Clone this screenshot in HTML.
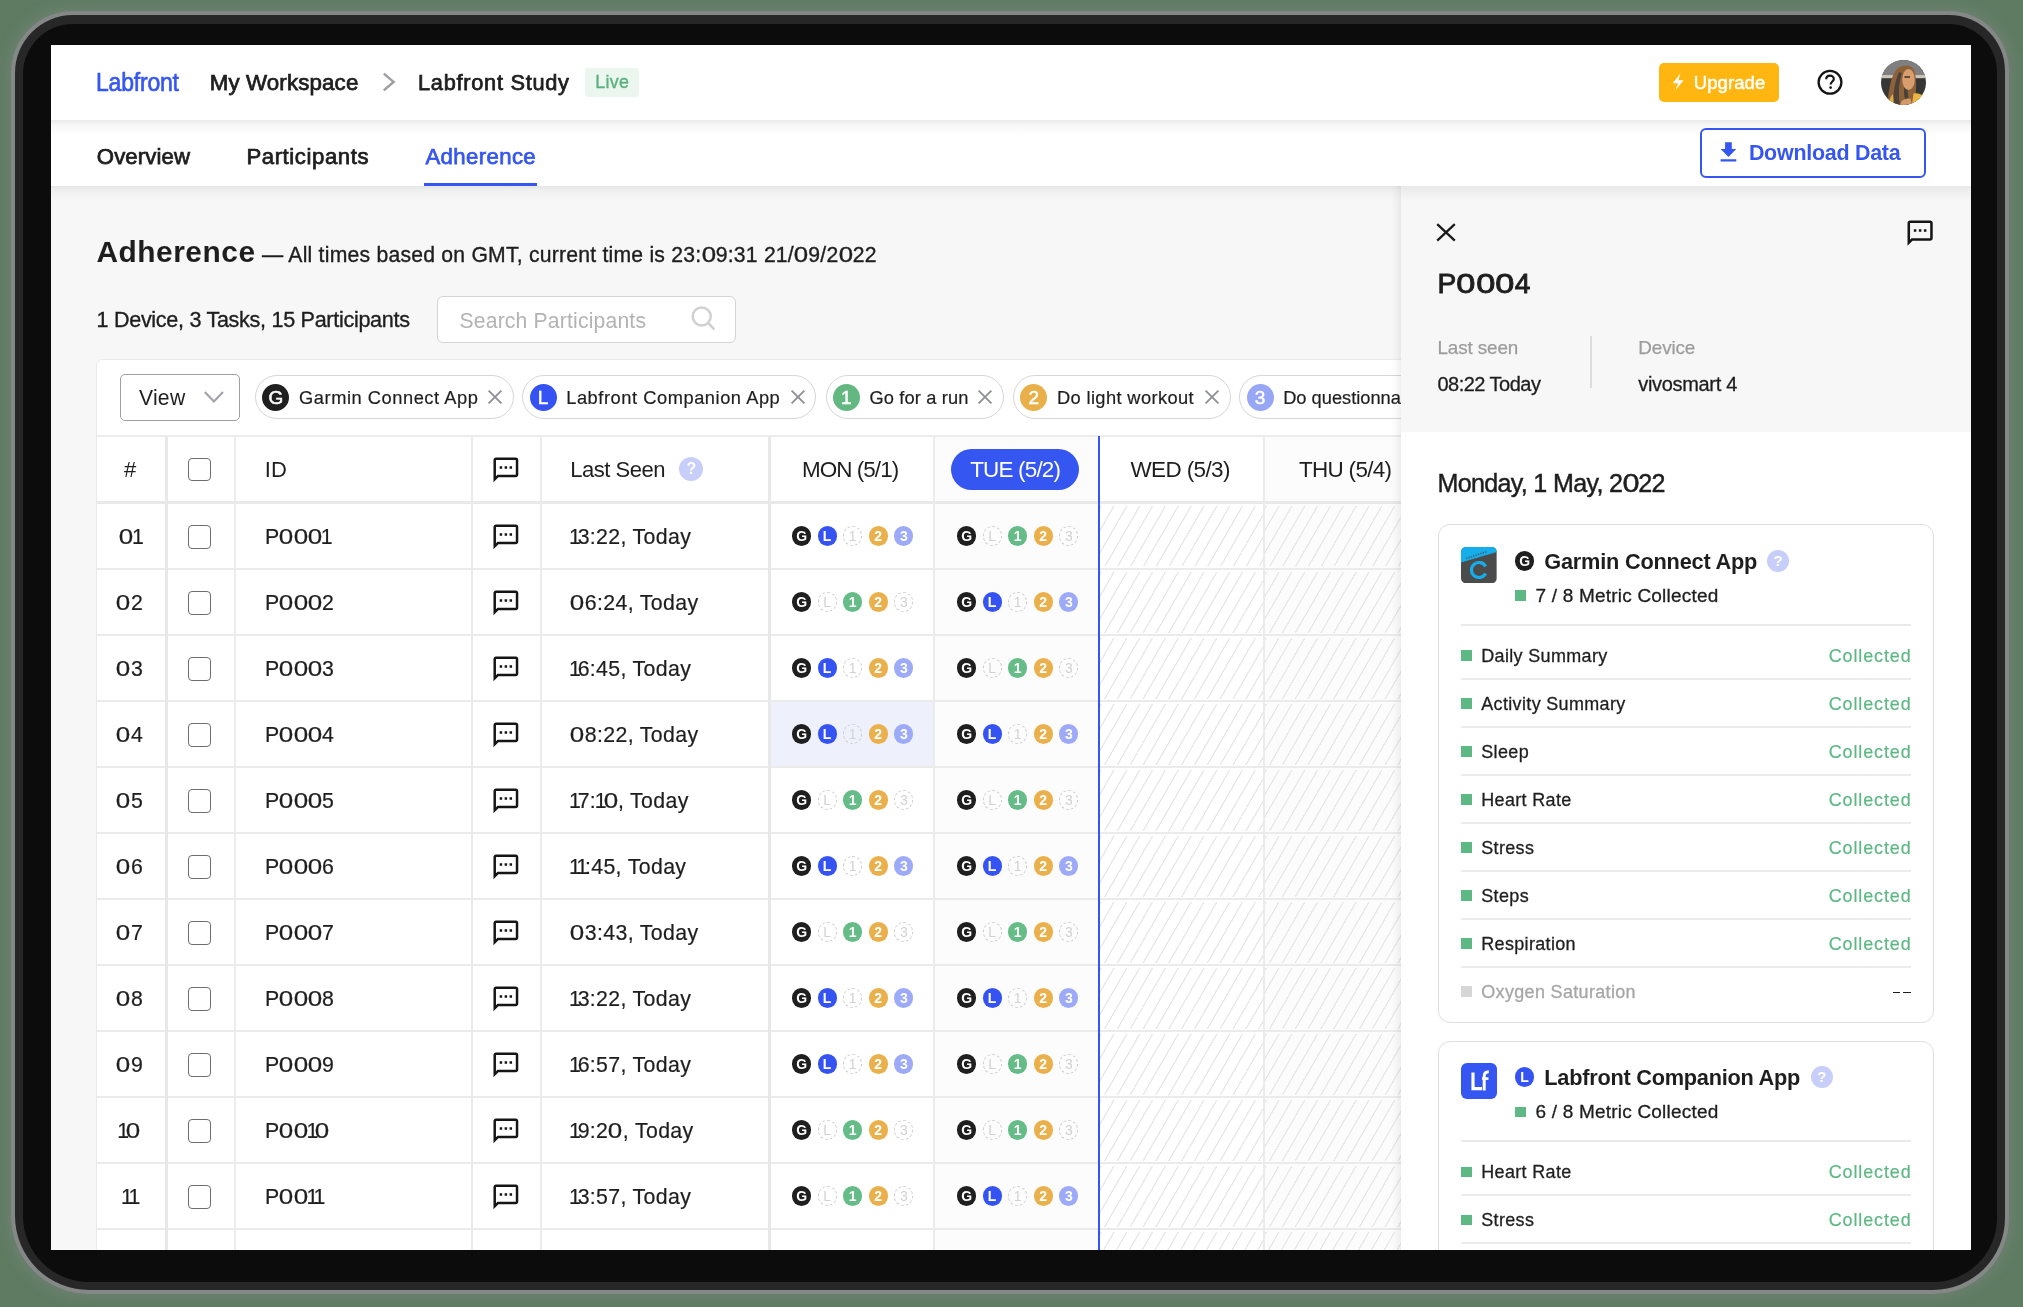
<!DOCTYPE html>
<html><head><meta charset="utf-8"><style>
html,body{margin:0;padding:0;width:2023px;height:1307px;overflow:hidden;background:#5f7c63;}
.t{position:absolute;white-space:pre;line-height:1;font-family:"Liberation Sans",sans-serif;}
.n1{margin:0 -0.17em 0 -0.06em}
.z0{display:inline-block;transform:scaleX(1.22);margin:0 0.055em}
#halo{display:none}
#ring{position:absolute;left:15px;top:15px;width:1990px;height:1275px;border-radius:58px 56px 72px 74px;background:#272727;box-shadow:0 0 0 4px rgba(139,138,140,0.8),0 0 14px 6px rgba(139,138,140,0.42);}
#bezel{position:absolute;left:23px;top:24px;width:1974px;height:1258px;border-radius:50px 48px 64px 66px;background:#0c0c0c;}
#screen{position:absolute;left:51px;top:45px;width:1920px;height:1205px;overflow:hidden;background:#fff;}
#inner{position:absolute;left:-51px;top:-45px;width:2023px;height:1307px;will-change:transform;}
</style></head><body>
<div id="halo"></div><div id="ring"></div><div id="bezel"></div>
<div id="screen"><div id="inner">
<div style="position:absolute;left:51.00px;top:45.00px;width:1920.00px;height:75.00px;background:#fff"></div>
<div style="position:absolute;left:51.00px;top:120.00px;width:1920.00px;height:66.00px;background:linear-gradient(#e9e9e9 0px,#f7f7f7 5px,#fff 15px)"></div>
<div style="position:absolute;left:51.00px;top:186.00px;width:1920.00px;height:1064.00px;background:linear-gradient(#e6e6e6 0px,#f0f0f0 5px,#f7f7f7 15px)"></div>
<div class="t" id="t0" style="left:96.00px;top:72.08px;font-size:23px;font-weight:400;color:#3556f0;letter-spacing:-0.201px;-webkit-text-stroke:0.6px #3556f0;transform:scaleY(1.16);transform-origin:0 19.5px;">Labfront</div>
<div class="t" id="t1" style="left:209.70px;top:72.01px;font-size:22.32px;font-weight:400;color:#1e1e1e;letter-spacing:0.133px;-webkit-text-stroke:0.75px #1e1e1e;">My Workspace</div>
<svg style="position:absolute;left:378.00px;top:68.00px;" width="22.00" height="28.00" viewBox="0 0 22 28"><polyline points="5.8,5.6 15.6,13.9 5.8,22.3" fill="none" stroke="#9c9ca2" stroke-width="2.4"/></svg>
<div class="t" id="t2" style="left:418.00px;top:72.00px;font-size:21.74px;font-weight:400;color:#1e1e1e;letter-spacing:0.740px;-webkit-text-stroke:0.75px #1e1e1e;">Labfront Study</div>
<div style="position:absolute;left:585.00px;top:68.00px;width:54.00px;height:29.00px;background:#eaf6ee;border-radius:4px"></div>
<div class="t" id="t3" style="left:595.30px;top:74.00px;font-size:17.83px;font-weight:400;color:#5bb07f;letter-spacing:0.327px;-webkit-text-stroke:0.35px #5bb07f;">Live</div>
<div style="position:absolute;left:1659.00px;top:63.00px;width:120.00px;height:39.00px;background:#ffb610;border-radius:5px"></div>
<svg style="position:absolute;left:1671.00px;top:72.00px;" width="15.00" height="20.00" viewBox="0 0 15 20"><path d="M9.5 1.3 L1.8 11.2 H7 L4.6 18 L12.6 8.3 H7.4 Z" fill="#fff"/></svg>
<div class="t" id="t4" style="left:1693.80px;top:74.01px;font-size:18.55px;font-weight:400;color:#fff;letter-spacing:0.068px;-webkit-text-stroke:0.45px #fff;">Upgrade</div>
<svg style="position:absolute;left:1815.00px;top:67.00px;" width="30.00" height="30.00" viewBox="0 0 30 30"><circle cx="15" cy="15.3" r="11.4" fill="none" stroke="#151515" stroke-width="2.3"/><path d="M11.2 12.3 C11.2 9.9 13 8.6 15 8.6 C17.1 8.6 18.8 10 18.8 12 C18.8 14.4 15.6 14.6 15.6 17.6" fill="none" stroke="#151515" stroke-width="2.2"/><circle cx="15.6" cy="20.6" r="1.35" fill="#151515"/></svg>
<svg style="position:absolute;left:1881.00px;top:60.00px;" width="45.00" height="45.00" viewBox="0 0 45 45"><defs><clipPath id="av"><circle cx="22.5" cy="22.5" r="22.5"/></clipPath></defs>
<g clip-path="url(#av)">
<rect width="45" height="45" fill="#363636"/>
<rect width="45" height="15.5" fill="#7f7f81"/>
<rect y="15" width="45" height="3.2" fill="#cbc5b6"/>
<path d="M7 45 C7 32 10 14 17 8 C23 4 30 5 32.5 9 C35.5 14 35.5 26 34.5 36 L35 45 Z" fill="#8e6239"/>
<path d="M12 45 C12 34 14 20 18 12 L21 13 C18 22 17 34 19 45 Z" fill="#4d4239"/>
<path d="M24 24 C22 30 23 38 26 45 L29 45 C27 38 26 30 27 24 Z" fill="#4a4038"/>
<ellipse cx="27.5" cy="19.5" rx="6.2" ry="10.5" fill="#d89e6e"/>
<path d="M23.5 17 H29" stroke="#3a302a" stroke-width="1.6"/>
<path d="M31 45 L32.5 33.5 C36.5 32.5 41 34.5 45 38 L45 45 Z" fill="#eeb443"/>
<path d="M19 45 C20 40 24 38 29.5 38.5 L31 45 Z" fill="#d49a6a"/>
<path d="M7 45 C8 40 10 36 12 34 L13 45 Z" fill="#e3ad45"/>
</g></svg>
<div class="t" id="t5" style="left:96.80px;top:146.01px;font-size:22.17px;font-weight:400;color:#1e1e1e;letter-spacing:0.122px;-webkit-text-stroke:0.75px #1e1e1e;">Overview</div>
<div class="t" id="t6" style="left:246.40px;top:146.01px;font-size:22.17px;font-weight:400;color:#1e1e1e;letter-spacing:0.576px;-webkit-text-stroke:0.75px #1e1e1e;">Participants</div>
<div class="t" id="t7" style="left:425.40px;top:146.01px;font-size:22.17px;font-weight:400;color:#3556f0;letter-spacing:0.391px;-webkit-text-stroke:0.75px #3556f0;">Adherence</div>
<div style="position:absolute;left:424.20px;top:182.70px;width:112.60px;height:3.10px;background:#3556f0"></div>
<div style="position:absolute;left:1700.00px;top:128.00px;width:226.00px;height:50.00px;border:2px solid #3556f0;border-radius:6px;background:#fff;box-sizing:border-box"></div>
<svg style="position:absolute;left:1714.60px;top:139.40px;" width="26.90" height="26.90" viewBox="0 0 24 24"><path d="M19 9h-4V3H9v6H5l7 7 7-7zM5 18v2h14v-2H5z" fill="#3556f0"/></svg>
<div class="t" id="t8" style="left:1748.90px;top:143.01px;font-size:21.45px;font-weight:700;color:#3556f0;letter-spacing:-0.254px;">Download Data</div>
<div class="t" id="t9" style="left:96.50px;top:237.00px;font-size:29.86px;font-weight:700;color:#1e1e1e;letter-spacing:0.521px;">Adherence</div>
<div class="t" id="t10" style="left:262.00px;top:244.01px;font-size:21.16px;font-weight:400;color:#1e1e1e;letter-spacing:0.227px;-webkit-text-stroke:0.35px #1e1e1e;">— All times based on GMT, current time is 23:<span class="z0">0</span>9:31 21/<span class="z0">0</span>9/2<span class="z0">0</span>22</div>
<div class="t" id="t11" style="left:96.50px;top:309.00px;font-size:21.59px;font-weight:400;color:#1e1e1e;letter-spacing:-0.301px;-webkit-text-stroke:0.35px #1e1e1e;">1 Device, 3 Tasks, 15 Participants</div>
<div style="position:absolute;left:437.00px;top:296.00px;width:299.00px;height:46.50px;border:1.5px solid #d4d4d4;border-radius:6px;background:#fff;box-sizing:border-box"></div>
<div class="t" id="t12" style="left:459.50px;top:310.01px;font-size:21.16px;font-weight:400;color:#b3b3b3;letter-spacing:0.169px;">Search Participants</div>
<svg style="position:absolute;left:688.00px;top:303.00px;" width="30.00" height="30.00" viewBox="0 0 30 30"><circle cx="13.7" cy="13.4" r="9" fill="none" stroke="#d0d0d0" stroke-width="2.5"/><line x1="20.2" y1="19.9" x2="26.3" y2="26.3" stroke="#d0d0d0" stroke-width="2.6"/></svg>
<div style="position:absolute;left:96.40px;top:358.70px;width:1308.60px;height:901.30px;background:#fff;border-top:1.5px solid #ebebeb;border-left:1.4px solid #ebebeb;border-top-left-radius:6px;box-sizing:border-box"></div>
<div style="position:absolute;left:120.20px;top:373.80px;width:119.40px;height:47.00px;border:1.5px solid #a0a0a0;border-radius:5px;box-sizing:border-box"></div>
<div class="t" id="t13" style="left:138.90px;top:387.00px;font-size:21.16px;font-weight:400;color:#1e1e1e;letter-spacing:0.272px;">View</div>
<svg style="position:absolute;left:200.00px;top:386.00px;" width="28.00" height="22.00" viewBox="0 0 28 22"><polyline points="4.8,6 13.9,15.4 23,6" fill="none" stroke="#a2a2aa" stroke-width="2.2"/></svg>
<div style="position:absolute;left:255.20px;top:375.20px;width:258.50px;height:44.20px;border:1.5px solid #d6d6d6;border-radius:23px;box-sizing:border-box;background:#fff"></div>
<div style="position:absolute;left:262.40px;top:383.80px;width:27.00px;height:27.00px;background:#1f1f1f;border-radius:50%"></div>
<div style="position:absolute;left:262.40px;top:383.80px;width:27px;height:27px;line-height:27px;text-align:center;color:#fff;font-family:'Liberation Sans',sans-serif;font-size:19px;font-weight:400;-webkit-text-stroke:0.5px #fff">G</div>
<div class="t" id="t14" style="left:299.10px;top:389.01px;font-size:18.26px;font-weight:400;color:#1e1e1e;letter-spacing:0.546px;-webkit-text-stroke:0.2px #1e1e1e;">Garmin Connect App</div>
<svg style="position:absolute;left:487.00px;top:389.40px;" width="16.00" height="16.00" viewBox="0 0 16 16"><path d="M1.6 1.6 L14.4 14.4 M14.4 1.6 L1.6 14.4" stroke="#8e9096" stroke-width="1.8"/></svg>
<div style="position:absolute;left:522.30px;top:375.20px;width:294.20px;height:44.20px;border:1.5px solid #d6d6d6;border-radius:23px;box-sizing:border-box;background:#fff"></div>
<div style="position:absolute;left:529.50px;top:383.80px;width:27.00px;height:27.00px;background:#3553f2;border-radius:50%"></div>
<div style="position:absolute;left:529.50px;top:383.80px;width:27px;height:27px;line-height:27px;text-align:center;color:#fff;font-family:'Liberation Sans',sans-serif;font-size:19px;font-weight:400;-webkit-text-stroke:0.5px #fff">L</div>
<div class="t" id="t15" style="left:566.20px;top:389.01px;font-size:18.26px;font-weight:400;color:#1e1e1e;letter-spacing:0.556px;-webkit-text-stroke:0.2px #1e1e1e;">Labfront Companion App</div>
<svg style="position:absolute;left:789.80px;top:389.40px;" width="16.00" height="16.00" viewBox="0 0 16 16"><path d="M1.6 1.6 L14.4 14.4 M14.4 1.6 L1.6 14.4" stroke="#8e9096" stroke-width="1.8"/></svg>
<div style="position:absolute;left:825.50px;top:375.20px;width:178.30px;height:44.20px;border:1.5px solid #d6d6d6;border-radius:23px;box-sizing:border-box;background:#fff"></div>
<div style="position:absolute;left:832.70px;top:383.80px;width:27.00px;height:27.00px;background:#63b882;border-radius:50%"></div>
<div style="position:absolute;left:832.70px;top:383.80px;width:27px;height:27px;line-height:27px;text-align:center;color:#fff;font-family:'Liberation Sans',sans-serif;font-size:19px;font-weight:400;-webkit-text-stroke:0.5px #fff">1</div>
<div class="t" id="t16" style="left:869.40px;top:389.01px;font-size:18.26px;font-weight:400;color:#1e1e1e;letter-spacing:0.146px;-webkit-text-stroke:0.2px #1e1e1e;">Go for a run</div>
<svg style="position:absolute;left:977.10px;top:389.40px;" width="16.00" height="16.00" viewBox="0 0 16 16"><path d="M1.6 1.6 L14.4 14.4 M14.4 1.6 L1.6 14.4" stroke="#8e9096" stroke-width="1.8"/></svg>
<div style="position:absolute;left:1013.00px;top:375.20px;width:217.60px;height:44.20px;border:1.5px solid #d6d6d6;border-radius:23px;box-sizing:border-box;background:#fff"></div>
<div style="position:absolute;left:1020.20px;top:383.80px;width:27.00px;height:27.00px;background:#e9b04a;border-radius:50%"></div>
<div style="position:absolute;left:1020.20px;top:383.80px;width:27px;height:27px;line-height:27px;text-align:center;color:#fff;font-family:'Liberation Sans',sans-serif;font-size:19px;font-weight:400;-webkit-text-stroke:0.5px #fff">2</div>
<div class="t" id="t17" style="left:1056.90px;top:389.01px;font-size:18.26px;font-weight:400;color:#1e1e1e;letter-spacing:0.389px;-webkit-text-stroke:0.2px #1e1e1e;">Do light workout</div>
<svg style="position:absolute;left:1203.90px;top:389.40px;" width="16.00" height="16.00" viewBox="0 0 16 16"><path d="M1.6 1.6 L14.4 14.4 M14.4 1.6 L1.6 14.4" stroke="#8e9096" stroke-width="1.8"/></svg>
<div style="position:absolute;left:1239.30px;top:375.20px;width:240.70px;height:44.20px;border:1.5px solid #d6d6d6;border-radius:23px;box-sizing:border-box;background:#fff"></div>
<div style="position:absolute;left:1246.50px;top:383.80px;width:27.00px;height:27.00px;background:#97a6f5;border-radius:50%"></div>
<div style="position:absolute;left:1246.50px;top:383.80px;width:27px;height:27px;line-height:27px;text-align:center;color:#fff;font-family:'Liberation Sans',sans-serif;font-size:19px;font-weight:400;-webkit-text-stroke:0.5px #fff">3</div>
<div class="t" id="t18" style="left:1283.20px;top:389.01px;font-size:18.26px;font-weight:400;color:#1e1e1e;-webkit-text-stroke:0.2px #1e1e1e;">Do questionnaire</div>
<div style="position:absolute;left:97.00px;top:435.00px;width:1308.00px;height:1.50px;background:#ececec"></div>
<div style="position:absolute;left:934.70px;top:436.50px;width:163.30px;height:813.50px;background:#fcfcfc"></div>
<div style="position:absolute;left:1264.90px;top:436.50px;width:140.10px;height:813.50px;background:#fcfcfc"></div>
<div style="position:absolute;left:771.00px;top:702.00px;width:161.70px;height:65.00px;background:#eef1fc"></div>
<div style="position:absolute;left:1100.00px;top:506.20px;width:163.10px;height:60.30px;background:repeating-linear-gradient(120deg,rgba(0,0,0,0) 0px,rgba(0,0,0,0) 0.2px,#e8e8e8 0.45px,#e8e8e8 1.55px,rgba(0,0,0,0) 1.8px,rgba(0,0,0,0) 11.13px)"></div>
<div style="position:absolute;left:1264.90px;top:506.20px;width:140.10px;height:60.30px;background:repeating-linear-gradient(120deg,rgba(0,0,0,0) 0px,rgba(0,0,0,0) 0.2px,#e8e8e8 0.45px,#e8e8e8 1.55px,rgba(0,0,0,0) 1.8px,rgba(0,0,0,0) 11.13px)"></div>
<div style="position:absolute;left:1100.00px;top:572.00px;width:163.10px;height:60.50px;background:repeating-linear-gradient(120deg,rgba(0,0,0,0) 0px,rgba(0,0,0,0) 0.2px,#e8e8e8 0.45px,#e8e8e8 1.55px,rgba(0,0,0,0) 1.8px,rgba(0,0,0,0) 11.13px)"></div>
<div style="position:absolute;left:1264.90px;top:572.00px;width:140.10px;height:60.50px;background:repeating-linear-gradient(120deg,rgba(0,0,0,0) 0px,rgba(0,0,0,0) 0.2px,#e8e8e8 0.45px,#e8e8e8 1.55px,rgba(0,0,0,0) 1.8px,rgba(0,0,0,0) 11.13px)"></div>
<div style="position:absolute;left:1100.00px;top:638.00px;width:163.10px;height:60.50px;background:repeating-linear-gradient(120deg,rgba(0,0,0,0) 0px,rgba(0,0,0,0) 0.2px,#e8e8e8 0.45px,#e8e8e8 1.55px,rgba(0,0,0,0) 1.8px,rgba(0,0,0,0) 11.13px)"></div>
<div style="position:absolute;left:1264.90px;top:638.00px;width:140.10px;height:60.50px;background:repeating-linear-gradient(120deg,rgba(0,0,0,0) 0px,rgba(0,0,0,0) 0.2px,#e8e8e8 0.45px,#e8e8e8 1.55px,rgba(0,0,0,0) 1.8px,rgba(0,0,0,0) 11.13px)"></div>
<div style="position:absolute;left:1100.00px;top:704.00px;width:163.10px;height:60.50px;background:repeating-linear-gradient(120deg,rgba(0,0,0,0) 0px,rgba(0,0,0,0) 0.2px,#e8e8e8 0.45px,#e8e8e8 1.55px,rgba(0,0,0,0) 1.8px,rgba(0,0,0,0) 11.13px)"></div>
<div style="position:absolute;left:1264.90px;top:704.00px;width:140.10px;height:60.50px;background:repeating-linear-gradient(120deg,rgba(0,0,0,0) 0px,rgba(0,0,0,0) 0.2px,#e8e8e8 0.45px,#e8e8e8 1.55px,rgba(0,0,0,0) 1.8px,rgba(0,0,0,0) 11.13px)"></div>
<div style="position:absolute;left:1100.00px;top:770.00px;width:163.10px;height:60.50px;background:repeating-linear-gradient(120deg,rgba(0,0,0,0) 0px,rgba(0,0,0,0) 0.2px,#e8e8e8 0.45px,#e8e8e8 1.55px,rgba(0,0,0,0) 1.8px,rgba(0,0,0,0) 11.13px)"></div>
<div style="position:absolute;left:1264.90px;top:770.00px;width:140.10px;height:60.50px;background:repeating-linear-gradient(120deg,rgba(0,0,0,0) 0px,rgba(0,0,0,0) 0.2px,#e8e8e8 0.45px,#e8e8e8 1.55px,rgba(0,0,0,0) 1.8px,rgba(0,0,0,0) 11.13px)"></div>
<div style="position:absolute;left:1100.00px;top:836.00px;width:163.10px;height:60.50px;background:repeating-linear-gradient(120deg,rgba(0,0,0,0) 0px,rgba(0,0,0,0) 0.2px,#e8e8e8 0.45px,#e8e8e8 1.55px,rgba(0,0,0,0) 1.8px,rgba(0,0,0,0) 11.13px)"></div>
<div style="position:absolute;left:1264.90px;top:836.00px;width:140.10px;height:60.50px;background:repeating-linear-gradient(120deg,rgba(0,0,0,0) 0px,rgba(0,0,0,0) 0.2px,#e8e8e8 0.45px,#e8e8e8 1.55px,rgba(0,0,0,0) 1.8px,rgba(0,0,0,0) 11.13px)"></div>
<div style="position:absolute;left:1100.00px;top:902.00px;width:163.10px;height:60.50px;background:repeating-linear-gradient(120deg,rgba(0,0,0,0) 0px,rgba(0,0,0,0) 0.2px,#e8e8e8 0.45px,#e8e8e8 1.55px,rgba(0,0,0,0) 1.8px,rgba(0,0,0,0) 11.13px)"></div>
<div style="position:absolute;left:1264.90px;top:902.00px;width:140.10px;height:60.50px;background:repeating-linear-gradient(120deg,rgba(0,0,0,0) 0px,rgba(0,0,0,0) 0.2px,#e8e8e8 0.45px,#e8e8e8 1.55px,rgba(0,0,0,0) 1.8px,rgba(0,0,0,0) 11.13px)"></div>
<div style="position:absolute;left:1100.00px;top:968.00px;width:163.10px;height:60.50px;background:repeating-linear-gradient(120deg,rgba(0,0,0,0) 0px,rgba(0,0,0,0) 0.2px,#e8e8e8 0.45px,#e8e8e8 1.55px,rgba(0,0,0,0) 1.8px,rgba(0,0,0,0) 11.13px)"></div>
<div style="position:absolute;left:1264.90px;top:968.00px;width:140.10px;height:60.50px;background:repeating-linear-gradient(120deg,rgba(0,0,0,0) 0px,rgba(0,0,0,0) 0.2px,#e8e8e8 0.45px,#e8e8e8 1.55px,rgba(0,0,0,0) 1.8px,rgba(0,0,0,0) 11.13px)"></div>
<div style="position:absolute;left:1100.00px;top:1034.00px;width:163.10px;height:60.50px;background:repeating-linear-gradient(120deg,rgba(0,0,0,0) 0px,rgba(0,0,0,0) 0.2px,#e8e8e8 0.45px,#e8e8e8 1.55px,rgba(0,0,0,0) 1.8px,rgba(0,0,0,0) 11.13px)"></div>
<div style="position:absolute;left:1264.90px;top:1034.00px;width:140.10px;height:60.50px;background:repeating-linear-gradient(120deg,rgba(0,0,0,0) 0px,rgba(0,0,0,0) 0.2px,#e8e8e8 0.45px,#e8e8e8 1.55px,rgba(0,0,0,0) 1.8px,rgba(0,0,0,0) 11.13px)"></div>
<div style="position:absolute;left:1100.00px;top:1100.00px;width:163.10px;height:60.50px;background:repeating-linear-gradient(120deg,rgba(0,0,0,0) 0px,rgba(0,0,0,0) 0.2px,#e8e8e8 0.45px,#e8e8e8 1.55px,rgba(0,0,0,0) 1.8px,rgba(0,0,0,0) 11.13px)"></div>
<div style="position:absolute;left:1264.90px;top:1100.00px;width:140.10px;height:60.50px;background:repeating-linear-gradient(120deg,rgba(0,0,0,0) 0px,rgba(0,0,0,0) 0.2px,#e8e8e8 0.45px,#e8e8e8 1.55px,rgba(0,0,0,0) 1.8px,rgba(0,0,0,0) 11.13px)"></div>
<div style="position:absolute;left:1100.00px;top:1166.00px;width:163.10px;height:60.50px;background:repeating-linear-gradient(120deg,rgba(0,0,0,0) 0px,rgba(0,0,0,0) 0.2px,#e8e8e8 0.45px,#e8e8e8 1.55px,rgba(0,0,0,0) 1.8px,rgba(0,0,0,0) 11.13px)"></div>
<div style="position:absolute;left:1264.90px;top:1166.00px;width:140.10px;height:60.50px;background:repeating-linear-gradient(120deg,rgba(0,0,0,0) 0px,rgba(0,0,0,0) 0.2px,#e8e8e8 0.45px,#e8e8e8 1.55px,rgba(0,0,0,0) 1.8px,rgba(0,0,0,0) 11.13px)"></div>
<div style="position:absolute;left:1100.00px;top:1232.00px;width:163.10px;height:20.50px;background:repeating-linear-gradient(120deg,rgba(0,0,0,0) 0px,rgba(0,0,0,0) 0.2px,#e8e8e8 0.45px,#e8e8e8 1.55px,rgba(0,0,0,0) 1.8px,rgba(0,0,0,0) 11.13px)"></div>
<div style="position:absolute;left:1264.90px;top:1232.00px;width:140.10px;height:20.50px;background:repeating-linear-gradient(120deg,rgba(0,0,0,0) 0px,rgba(0,0,0,0) 0.2px,#e8e8e8 0.45px,#e8e8e8 1.55px,rgba(0,0,0,0) 1.8px,rgba(0,0,0,0) 11.13px)"></div>
<div style="position:absolute;left:97.00px;top:501.30px;width:1308.00px;height:2.90px;background:#e9e9e9"></div>
<div style="position:absolute;left:97.00px;top:568.20px;width:1308.00px;height:2.00px;background:#ebebeb"></div>
<div style="position:absolute;left:97.00px;top:634.20px;width:1308.00px;height:2.00px;background:#ebebeb"></div>
<div style="position:absolute;left:97.00px;top:700.20px;width:1308.00px;height:2.00px;background:#ebebeb"></div>
<div style="position:absolute;left:97.00px;top:766.20px;width:1308.00px;height:2.00px;background:#ebebeb"></div>
<div style="position:absolute;left:97.00px;top:832.20px;width:1308.00px;height:2.00px;background:#ebebeb"></div>
<div style="position:absolute;left:97.00px;top:898.20px;width:1308.00px;height:2.00px;background:#ebebeb"></div>
<div style="position:absolute;left:97.00px;top:964.20px;width:1308.00px;height:2.00px;background:#ebebeb"></div>
<div style="position:absolute;left:97.00px;top:1030.20px;width:1308.00px;height:2.00px;background:#ebebeb"></div>
<div style="position:absolute;left:97.00px;top:1096.20px;width:1308.00px;height:2.00px;background:#ebebeb"></div>
<div style="position:absolute;left:97.00px;top:1162.20px;width:1308.00px;height:2.00px;background:#ebebeb"></div>
<div style="position:absolute;left:97.00px;top:1228.20px;width:1308.00px;height:2.00px;background:#ebebeb"></div>
<div style="position:absolute;left:165.20px;top:436.50px;width:2.80px;height:813.50px;background:#e8e8e8"></div>
<div style="position:absolute;left:234.00px;top:436.50px;width:2.00px;height:813.50px;background:#ececec"></div>
<div style="position:absolute;left:470.50px;top:436.50px;width:2.00px;height:813.50px;background:#ebebeb"></div>
<div style="position:absolute;left:540.00px;top:436.50px;width:2.00px;height:813.50px;background:#ebebeb"></div>
<div style="position:absolute;left:768.00px;top:436.50px;width:3.00px;height:813.50px;background:#e8e8e8"></div>
<div style="position:absolute;left:932.70px;top:436.50px;width:2.00px;height:813.50px;background:#ebebeb"></div>
<div style="position:absolute;left:1263.10px;top:436.50px;width:1.80px;height:813.50px;background:#ebebeb"></div>
<div style="position:absolute;left:1098.00px;top:436.00px;width:2.00px;height:814.00px;background:#3556f0"></div>
<div class="t" id="t19" style="left:124.00px;top:459.01px;font-size:22.03px;font-weight:400;color:#1e1e1e;">#</div>
<div style="position:absolute;left:187.80px;top:457.60px;width:23.50px;height:23.40px;border:1.8px solid #6e6e6e;border-radius:4px;box-sizing:border-box"></div>
<div class="t" id="t20" style="left:264.80px;top:459.01px;font-size:22.03px;font-weight:400;color:#1e1e1e;">ID</div>
<svg style="position:absolute;left:490.60px;top:454.60px;" width="29.76" height="29.76" viewBox="0 0 24 24"><path d="M20 2H4c-1.1 0-2 .9-2 2v18l4-4h14c1.1 0 2-.9 2-2V4c0-1.1-.9-2-2-2zm0 14H5.17L4 17.17V4h16v12zM7 9h2v2H7zm4 0h2v2h-2zm4 0h2v2h-2z" fill="#151515"/></svg>
<div class="t" id="t21" style="left:570.30px;top:459.01px;font-size:22.03px;font-weight:400;color:#1e1e1e;letter-spacing:-0.482px;">Last Seen</div>
<div style="position:absolute;left:679.40px;top:457.00px;width:24.00px;height:24.00px;background:#c6cef9;border-radius:50%"></div>
<div style="position:absolute;left:679.4px;top:457px;width:24px;height:24px;line-height:24px;text-align:center;color:#fff;font-family:'Liberation Sans',sans-serif;font-size:16px;font-weight:700">?</div>
<div class="t" id="t22" style="left:801.90px;top:459.01px;font-size:22.46px;font-weight:400;color:#1e1e1e;letter-spacing:-0.937px;">MON (5/1)</div>
<div style="position:absolute;left:950.80px;top:448.70px;width:128.70px;height:41.70px;background:#3556f0;border-radius:21px"></div>
<div class="t" id="t23" style="left:970.20px;top:459.01px;font-size:22.46px;font-weight:400;color:#fff;letter-spacing:-0.814px;">TUE (5/2)</div>
<div class="t" id="t24" style="left:1130.50px;top:459.01px;font-size:22.46px;font-weight:400;color:#1e1e1e;letter-spacing:-0.600px;">WED (5/3)</div>
<div class="t" id="t25" style="left:1299.00px;top:459.01px;font-size:22.46px;font-weight:400;color:#1e1e1e;letter-spacing:-0.695px;">THU (5/4)</div>
<div class="t" id="t26" style="left:118.62px;top:527.01px;font-size:21.3px;font-weight:400;color:#1e1e1e;letter-spacing:0.600px;-webkit-text-stroke:0.2px #1e1e1e;"><span class="z0">0</span><span class="n1">1</span></div>
<div style="position:absolute;left:187.80px;top:525.30px;width:23.50px;height:23.40px;border:1.8px solid #6e6e6e;border-radius:4px;box-sizing:border-box"></div>
<div class="t" id="t27" style="left:264.90px;top:527.01px;font-size:21.3px;font-weight:400;color:#1e1e1e;letter-spacing:0.100px;-webkit-text-stroke:0.2px #1e1e1e;">P<span class="z0">0</span><span class="z0">0</span><span class="z0">0</span><span class="n1">1</span></div>
<svg style="position:absolute;left:490.60px;top:521.60px;" width="29.76" height="29.76" viewBox="0 0 24 24"><path d="M20 2H4c-1.1 0-2 .9-2 2v18l4-4h14c1.1 0 2-.9 2-2V4c0-1.1-.9-2-2-2zm0 14H5.17L4 17.17V4h16v12zM7 9h2v2H7zm4 0h2v2h-2zm4 0h2v2h-2z" fill="#151515"/></svg>
<div class="t" id="t28" style="left:570.30px;top:527.01px;font-size:21.3px;font-weight:400;color:#1e1e1e;letter-spacing:0.350px;-webkit-text-stroke:0.2px #1e1e1e;"><span class="n1">1</span>3:22, Today</div>
<div style="position:absolute;left:791.95px;top:526.45px;width:19.30px;height:19.30px;background:#1f1f1f;border-radius:50%"></div>
<div style="position:absolute;left:791.60px;top:526.10px;width:20px;height:20px;line-height:20px;text-align:center;color:#fff;font-family:'Liberation Sans',sans-serif;font-size:14px;font-weight:700">G</div>
<div style="position:absolute;left:817.50px;top:526.45px;width:19.30px;height:19.30px;background:#3553f2;border-radius:50%"></div>
<div style="position:absolute;left:817.15px;top:526.10px;width:20px;height:20px;line-height:20px;text-align:center;color:#fff;font-family:'Liberation Sans',sans-serif;font-size:14px;font-weight:700">L</div>
<div style="position:absolute;left:843.05px;top:526.45px;width:19.30px;height:19.30px;border:1.5px dashed #cbcbcb;border-radius:50%;box-sizing:border-box"></div>
<div style="position:absolute;left:842.70px;top:526.10px;width:20px;height:20px;line-height:20px;text-align:center;color:#d2d2d2;font-family:'Liberation Sans',sans-serif;font-size:14px">1</div>
<div style="position:absolute;left:868.60px;top:526.45px;width:19.30px;height:19.30px;background:#eab04c;border-radius:50%"></div>
<div style="position:absolute;left:868.25px;top:526.10px;width:20px;height:20px;line-height:20px;text-align:center;color:#fff;font-family:'Liberation Sans',sans-serif;font-size:14px;font-weight:700">2</div>
<div style="position:absolute;left:894.15px;top:526.45px;width:19.30px;height:19.30px;background:#9caaf8;border-radius:50%"></div>
<div style="position:absolute;left:893.80px;top:526.10px;width:20px;height:20px;line-height:20px;text-align:center;color:#fff;font-family:'Liberation Sans',sans-serif;font-size:14px;font-weight:700">3</div>
<div style="position:absolute;left:956.95px;top:526.45px;width:19.30px;height:19.30px;background:#1f1f1f;border-radius:50%"></div>
<div style="position:absolute;left:956.60px;top:526.10px;width:20px;height:20px;line-height:20px;text-align:center;color:#fff;font-family:'Liberation Sans',sans-serif;font-size:14px;font-weight:700">G</div>
<div style="position:absolute;left:982.50px;top:526.45px;width:19.30px;height:19.30px;border:1.5px dashed #cbcbcb;border-radius:50%;box-sizing:border-box"></div>
<div style="position:absolute;left:982.15px;top:526.10px;width:20px;height:20px;line-height:20px;text-align:center;color:#d2d2d2;font-family:'Liberation Sans',sans-serif;font-size:14px">L</div>
<div style="position:absolute;left:1008.05px;top:526.45px;width:19.30px;height:19.30px;background:#65bc87;border-radius:50%"></div>
<div style="position:absolute;left:1007.70px;top:526.10px;width:20px;height:20px;line-height:20px;text-align:center;color:#fff;font-family:'Liberation Sans',sans-serif;font-size:14px;font-weight:700">1</div>
<div style="position:absolute;left:1033.60px;top:526.45px;width:19.30px;height:19.30px;background:#eab04c;border-radius:50%"></div>
<div style="position:absolute;left:1033.25px;top:526.10px;width:20px;height:20px;line-height:20px;text-align:center;color:#fff;font-family:'Liberation Sans',sans-serif;font-size:14px;font-weight:700">2</div>
<div style="position:absolute;left:1059.15px;top:526.45px;width:19.30px;height:19.30px;border:1.5px dashed #cbcbcb;border-radius:50%;box-sizing:border-box"></div>
<div style="position:absolute;left:1058.80px;top:526.10px;width:20px;height:20px;line-height:20px;text-align:center;color:#d2d2d2;font-family:'Liberation Sans',sans-serif;font-size:14px">3</div>
<div class="t" id="t29" style="left:116.18px;top:593.01px;font-size:21.3px;font-weight:400;color:#1e1e1e;letter-spacing:0.600px;-webkit-text-stroke:0.2px #1e1e1e;"><span class="z0">0</span>2</div>
<div style="position:absolute;left:187.80px;top:591.30px;width:23.50px;height:23.40px;border:1.8px solid #6e6e6e;border-radius:4px;box-sizing:border-box"></div>
<div class="t" id="t30" style="left:264.90px;top:593.01px;font-size:21.3px;font-weight:400;color:#1e1e1e;letter-spacing:0.100px;-webkit-text-stroke:0.2px #1e1e1e;">P<span class="z0">0</span><span class="z0">0</span><span class="z0">0</span>2</div>
<svg style="position:absolute;left:490.60px;top:587.60px;" width="29.76" height="29.76" viewBox="0 0 24 24"><path d="M20 2H4c-1.1 0-2 .9-2 2v18l4-4h14c1.1 0 2-.9 2-2V4c0-1.1-.9-2-2-2zm0 14H5.17L4 17.17V4h16v12zM7 9h2v2H7zm4 0h2v2h-2zm4 0h2v2h-2z" fill="#151515"/></svg>
<div class="t" id="t31" style="left:570.30px;top:593.01px;font-size:21.3px;font-weight:400;color:#1e1e1e;letter-spacing:0.350px;-webkit-text-stroke:0.2px #1e1e1e;"><span class="z0">0</span>6:24, Today</div>
<div style="position:absolute;left:791.95px;top:592.45px;width:19.30px;height:19.30px;background:#1f1f1f;border-radius:50%"></div>
<div style="position:absolute;left:791.60px;top:592.10px;width:20px;height:20px;line-height:20px;text-align:center;color:#fff;font-family:'Liberation Sans',sans-serif;font-size:14px;font-weight:700">G</div>
<div style="position:absolute;left:817.50px;top:592.45px;width:19.30px;height:19.30px;border:1.5px dashed #cbcbcb;border-radius:50%;box-sizing:border-box"></div>
<div style="position:absolute;left:817.15px;top:592.10px;width:20px;height:20px;line-height:20px;text-align:center;color:#d2d2d2;font-family:'Liberation Sans',sans-serif;font-size:14px">L</div>
<div style="position:absolute;left:843.05px;top:592.45px;width:19.30px;height:19.30px;background:#65bc87;border-radius:50%"></div>
<div style="position:absolute;left:842.70px;top:592.10px;width:20px;height:20px;line-height:20px;text-align:center;color:#fff;font-family:'Liberation Sans',sans-serif;font-size:14px;font-weight:700">1</div>
<div style="position:absolute;left:868.60px;top:592.45px;width:19.30px;height:19.30px;background:#eab04c;border-radius:50%"></div>
<div style="position:absolute;left:868.25px;top:592.10px;width:20px;height:20px;line-height:20px;text-align:center;color:#fff;font-family:'Liberation Sans',sans-serif;font-size:14px;font-weight:700">2</div>
<div style="position:absolute;left:894.15px;top:592.45px;width:19.30px;height:19.30px;border:1.5px dashed #cbcbcb;border-radius:50%;box-sizing:border-box"></div>
<div style="position:absolute;left:893.80px;top:592.10px;width:20px;height:20px;line-height:20px;text-align:center;color:#d2d2d2;font-family:'Liberation Sans',sans-serif;font-size:14px">3</div>
<div style="position:absolute;left:956.95px;top:592.45px;width:19.30px;height:19.30px;background:#1f1f1f;border-radius:50%"></div>
<div style="position:absolute;left:956.60px;top:592.10px;width:20px;height:20px;line-height:20px;text-align:center;color:#fff;font-family:'Liberation Sans',sans-serif;font-size:14px;font-weight:700">G</div>
<div style="position:absolute;left:982.50px;top:592.45px;width:19.30px;height:19.30px;background:#3553f2;border-radius:50%"></div>
<div style="position:absolute;left:982.15px;top:592.10px;width:20px;height:20px;line-height:20px;text-align:center;color:#fff;font-family:'Liberation Sans',sans-serif;font-size:14px;font-weight:700">L</div>
<div style="position:absolute;left:1008.05px;top:592.45px;width:19.30px;height:19.30px;border:1.5px dashed #cbcbcb;border-radius:50%;box-sizing:border-box"></div>
<div style="position:absolute;left:1007.70px;top:592.10px;width:20px;height:20px;line-height:20px;text-align:center;color:#d2d2d2;font-family:'Liberation Sans',sans-serif;font-size:14px">1</div>
<div style="position:absolute;left:1033.60px;top:592.45px;width:19.30px;height:19.30px;background:#eab04c;border-radius:50%"></div>
<div style="position:absolute;left:1033.25px;top:592.10px;width:20px;height:20px;line-height:20px;text-align:center;color:#fff;font-family:'Liberation Sans',sans-serif;font-size:14px;font-weight:700">2</div>
<div style="position:absolute;left:1059.15px;top:592.45px;width:19.30px;height:19.30px;background:#9caaf8;border-radius:50%"></div>
<div style="position:absolute;left:1058.80px;top:592.10px;width:20px;height:20px;line-height:20px;text-align:center;color:#fff;font-family:'Liberation Sans',sans-serif;font-size:14px;font-weight:700">3</div>
<div class="t" id="t32" style="left:116.18px;top:659.01px;font-size:21.3px;font-weight:400;color:#1e1e1e;letter-spacing:0.600px;-webkit-text-stroke:0.2px #1e1e1e;"><span class="z0">0</span>3</div>
<div style="position:absolute;left:187.80px;top:657.30px;width:23.50px;height:23.40px;border:1.8px solid #6e6e6e;border-radius:4px;box-sizing:border-box"></div>
<div class="t" id="t33" style="left:264.90px;top:659.01px;font-size:21.3px;font-weight:400;color:#1e1e1e;letter-spacing:0.100px;-webkit-text-stroke:0.2px #1e1e1e;">P<span class="z0">0</span><span class="z0">0</span><span class="z0">0</span>3</div>
<svg style="position:absolute;left:490.60px;top:653.60px;" width="29.76" height="29.76" viewBox="0 0 24 24"><path d="M20 2H4c-1.1 0-2 .9-2 2v18l4-4h14c1.1 0 2-.9 2-2V4c0-1.1-.9-2-2-2zm0 14H5.17L4 17.17V4h16v12zM7 9h2v2H7zm4 0h2v2h-2zm4 0h2v2h-2z" fill="#151515"/></svg>
<div class="t" id="t34" style="left:570.30px;top:659.01px;font-size:21.3px;font-weight:400;color:#1e1e1e;letter-spacing:0.350px;-webkit-text-stroke:0.2px #1e1e1e;"><span class="n1">1</span>6:45, Today</div>
<div style="position:absolute;left:791.95px;top:658.45px;width:19.30px;height:19.30px;background:#1f1f1f;border-radius:50%"></div>
<div style="position:absolute;left:791.60px;top:658.10px;width:20px;height:20px;line-height:20px;text-align:center;color:#fff;font-family:'Liberation Sans',sans-serif;font-size:14px;font-weight:700">G</div>
<div style="position:absolute;left:817.50px;top:658.45px;width:19.30px;height:19.30px;background:#3553f2;border-radius:50%"></div>
<div style="position:absolute;left:817.15px;top:658.10px;width:20px;height:20px;line-height:20px;text-align:center;color:#fff;font-family:'Liberation Sans',sans-serif;font-size:14px;font-weight:700">L</div>
<div style="position:absolute;left:843.05px;top:658.45px;width:19.30px;height:19.30px;border:1.5px dashed #cbcbcb;border-radius:50%;box-sizing:border-box"></div>
<div style="position:absolute;left:842.70px;top:658.10px;width:20px;height:20px;line-height:20px;text-align:center;color:#d2d2d2;font-family:'Liberation Sans',sans-serif;font-size:14px">1</div>
<div style="position:absolute;left:868.60px;top:658.45px;width:19.30px;height:19.30px;background:#eab04c;border-radius:50%"></div>
<div style="position:absolute;left:868.25px;top:658.10px;width:20px;height:20px;line-height:20px;text-align:center;color:#fff;font-family:'Liberation Sans',sans-serif;font-size:14px;font-weight:700">2</div>
<div style="position:absolute;left:894.15px;top:658.45px;width:19.30px;height:19.30px;background:#9caaf8;border-radius:50%"></div>
<div style="position:absolute;left:893.80px;top:658.10px;width:20px;height:20px;line-height:20px;text-align:center;color:#fff;font-family:'Liberation Sans',sans-serif;font-size:14px;font-weight:700">3</div>
<div style="position:absolute;left:956.95px;top:658.45px;width:19.30px;height:19.30px;background:#1f1f1f;border-radius:50%"></div>
<div style="position:absolute;left:956.60px;top:658.10px;width:20px;height:20px;line-height:20px;text-align:center;color:#fff;font-family:'Liberation Sans',sans-serif;font-size:14px;font-weight:700">G</div>
<div style="position:absolute;left:982.50px;top:658.45px;width:19.30px;height:19.30px;border:1.5px dashed #cbcbcb;border-radius:50%;box-sizing:border-box"></div>
<div style="position:absolute;left:982.15px;top:658.10px;width:20px;height:20px;line-height:20px;text-align:center;color:#d2d2d2;font-family:'Liberation Sans',sans-serif;font-size:14px">L</div>
<div style="position:absolute;left:1008.05px;top:658.45px;width:19.30px;height:19.30px;background:#65bc87;border-radius:50%"></div>
<div style="position:absolute;left:1007.70px;top:658.10px;width:20px;height:20px;line-height:20px;text-align:center;color:#fff;font-family:'Liberation Sans',sans-serif;font-size:14px;font-weight:700">1</div>
<div style="position:absolute;left:1033.60px;top:658.45px;width:19.30px;height:19.30px;background:#eab04c;border-radius:50%"></div>
<div style="position:absolute;left:1033.25px;top:658.10px;width:20px;height:20px;line-height:20px;text-align:center;color:#fff;font-family:'Liberation Sans',sans-serif;font-size:14px;font-weight:700">2</div>
<div style="position:absolute;left:1059.15px;top:658.45px;width:19.30px;height:19.30px;border:1.5px dashed #cbcbcb;border-radius:50%;box-sizing:border-box"></div>
<div style="position:absolute;left:1058.80px;top:658.10px;width:20px;height:20px;line-height:20px;text-align:center;color:#d2d2d2;font-family:'Liberation Sans',sans-serif;font-size:14px">3</div>
<div class="t" id="t35" style="left:116.18px;top:725.01px;font-size:21.3px;font-weight:400;color:#1e1e1e;letter-spacing:0.600px;-webkit-text-stroke:0.2px #1e1e1e;"><span class="z0">0</span>4</div>
<div style="position:absolute;left:187.80px;top:723.30px;width:23.50px;height:23.40px;border:1.8px solid #6e6e6e;border-radius:4px;box-sizing:border-box"></div>
<div class="t" id="t36" style="left:264.90px;top:725.01px;font-size:21.3px;font-weight:400;color:#1e1e1e;letter-spacing:0.100px;-webkit-text-stroke:0.2px #1e1e1e;">P<span class="z0">0</span><span class="z0">0</span><span class="z0">0</span>4</div>
<svg style="position:absolute;left:490.60px;top:719.60px;" width="29.76" height="29.76" viewBox="0 0 24 24"><path d="M20 2H4c-1.1 0-2 .9-2 2v18l4-4h14c1.1 0 2-.9 2-2V4c0-1.1-.9-2-2-2zm0 14H5.17L4 17.17V4h16v12zM7 9h2v2H7zm4 0h2v2h-2zm4 0h2v2h-2z" fill="#151515"/></svg>
<div class="t" id="t37" style="left:570.30px;top:725.01px;font-size:21.3px;font-weight:400;color:#1e1e1e;letter-spacing:0.350px;-webkit-text-stroke:0.2px #1e1e1e;"><span class="z0">0</span>8:22, Today</div>
<div style="position:absolute;left:791.95px;top:724.45px;width:19.30px;height:19.30px;background:#1f1f1f;border-radius:50%"></div>
<div style="position:absolute;left:791.60px;top:724.10px;width:20px;height:20px;line-height:20px;text-align:center;color:#fff;font-family:'Liberation Sans',sans-serif;font-size:14px;font-weight:700">G</div>
<div style="position:absolute;left:817.50px;top:724.45px;width:19.30px;height:19.30px;background:#3553f2;border-radius:50%"></div>
<div style="position:absolute;left:817.15px;top:724.10px;width:20px;height:20px;line-height:20px;text-align:center;color:#fff;font-family:'Liberation Sans',sans-serif;font-size:14px;font-weight:700">L</div>
<div style="position:absolute;left:843.05px;top:724.45px;width:19.30px;height:19.30px;border:1.5px dashed #cbcbcb;border-radius:50%;box-sizing:border-box"></div>
<div style="position:absolute;left:842.70px;top:724.10px;width:20px;height:20px;line-height:20px;text-align:center;color:#d2d2d2;font-family:'Liberation Sans',sans-serif;font-size:14px">1</div>
<div style="position:absolute;left:868.60px;top:724.45px;width:19.30px;height:19.30px;background:#eab04c;border-radius:50%"></div>
<div style="position:absolute;left:868.25px;top:724.10px;width:20px;height:20px;line-height:20px;text-align:center;color:#fff;font-family:'Liberation Sans',sans-serif;font-size:14px;font-weight:700">2</div>
<div style="position:absolute;left:894.15px;top:724.45px;width:19.30px;height:19.30px;background:#9caaf8;border-radius:50%"></div>
<div style="position:absolute;left:893.80px;top:724.10px;width:20px;height:20px;line-height:20px;text-align:center;color:#fff;font-family:'Liberation Sans',sans-serif;font-size:14px;font-weight:700">3</div>
<div style="position:absolute;left:956.95px;top:724.45px;width:19.30px;height:19.30px;background:#1f1f1f;border-radius:50%"></div>
<div style="position:absolute;left:956.60px;top:724.10px;width:20px;height:20px;line-height:20px;text-align:center;color:#fff;font-family:'Liberation Sans',sans-serif;font-size:14px;font-weight:700">G</div>
<div style="position:absolute;left:982.50px;top:724.45px;width:19.30px;height:19.30px;background:#3553f2;border-radius:50%"></div>
<div style="position:absolute;left:982.15px;top:724.10px;width:20px;height:20px;line-height:20px;text-align:center;color:#fff;font-family:'Liberation Sans',sans-serif;font-size:14px;font-weight:700">L</div>
<div style="position:absolute;left:1008.05px;top:724.45px;width:19.30px;height:19.30px;border:1.5px dashed #cbcbcb;border-radius:50%;box-sizing:border-box"></div>
<div style="position:absolute;left:1007.70px;top:724.10px;width:20px;height:20px;line-height:20px;text-align:center;color:#d2d2d2;font-family:'Liberation Sans',sans-serif;font-size:14px">1</div>
<div style="position:absolute;left:1033.60px;top:724.45px;width:19.30px;height:19.30px;background:#eab04c;border-radius:50%"></div>
<div style="position:absolute;left:1033.25px;top:724.10px;width:20px;height:20px;line-height:20px;text-align:center;color:#fff;font-family:'Liberation Sans',sans-serif;font-size:14px;font-weight:700">2</div>
<div style="position:absolute;left:1059.15px;top:724.45px;width:19.30px;height:19.30px;background:#9caaf8;border-radius:50%"></div>
<div style="position:absolute;left:1058.80px;top:724.10px;width:20px;height:20px;line-height:20px;text-align:center;color:#fff;font-family:'Liberation Sans',sans-serif;font-size:14px;font-weight:700">3</div>
<div class="t" id="t38" style="left:116.18px;top:791.01px;font-size:21.3px;font-weight:400;color:#1e1e1e;letter-spacing:0.600px;-webkit-text-stroke:0.2px #1e1e1e;"><span class="z0">0</span>5</div>
<div style="position:absolute;left:187.80px;top:789.30px;width:23.50px;height:23.40px;border:1.8px solid #6e6e6e;border-radius:4px;box-sizing:border-box"></div>
<div class="t" id="t39" style="left:264.90px;top:791.01px;font-size:21.3px;font-weight:400;color:#1e1e1e;letter-spacing:0.100px;-webkit-text-stroke:0.2px #1e1e1e;">P<span class="z0">0</span><span class="z0">0</span><span class="z0">0</span>5</div>
<svg style="position:absolute;left:490.60px;top:785.60px;" width="29.76" height="29.76" viewBox="0 0 24 24"><path d="M20 2H4c-1.1 0-2 .9-2 2v18l4-4h14c1.1 0 2-.9 2-2V4c0-1.1-.9-2-2-2zm0 14H5.17L4 17.17V4h16v12zM7 9h2v2H7zm4 0h2v2h-2zm4 0h2v2h-2z" fill="#151515"/></svg>
<div class="t" id="t40" style="left:570.30px;top:791.01px;font-size:21.3px;font-weight:400;color:#1e1e1e;letter-spacing:0.350px;-webkit-text-stroke:0.2px #1e1e1e;"><span class="n1">1</span>7:<span class="n1">1</span><span class="z0">0</span>, Today</div>
<div style="position:absolute;left:791.95px;top:790.45px;width:19.30px;height:19.30px;background:#1f1f1f;border-radius:50%"></div>
<div style="position:absolute;left:791.60px;top:790.10px;width:20px;height:20px;line-height:20px;text-align:center;color:#fff;font-family:'Liberation Sans',sans-serif;font-size:14px;font-weight:700">G</div>
<div style="position:absolute;left:817.50px;top:790.45px;width:19.30px;height:19.30px;border:1.5px dashed #cbcbcb;border-radius:50%;box-sizing:border-box"></div>
<div style="position:absolute;left:817.15px;top:790.10px;width:20px;height:20px;line-height:20px;text-align:center;color:#d2d2d2;font-family:'Liberation Sans',sans-serif;font-size:14px">L</div>
<div style="position:absolute;left:843.05px;top:790.45px;width:19.30px;height:19.30px;background:#65bc87;border-radius:50%"></div>
<div style="position:absolute;left:842.70px;top:790.10px;width:20px;height:20px;line-height:20px;text-align:center;color:#fff;font-family:'Liberation Sans',sans-serif;font-size:14px;font-weight:700">1</div>
<div style="position:absolute;left:868.60px;top:790.45px;width:19.30px;height:19.30px;background:#eab04c;border-radius:50%"></div>
<div style="position:absolute;left:868.25px;top:790.10px;width:20px;height:20px;line-height:20px;text-align:center;color:#fff;font-family:'Liberation Sans',sans-serif;font-size:14px;font-weight:700">2</div>
<div style="position:absolute;left:894.15px;top:790.45px;width:19.30px;height:19.30px;border:1.5px dashed #cbcbcb;border-radius:50%;box-sizing:border-box"></div>
<div style="position:absolute;left:893.80px;top:790.10px;width:20px;height:20px;line-height:20px;text-align:center;color:#d2d2d2;font-family:'Liberation Sans',sans-serif;font-size:14px">3</div>
<div style="position:absolute;left:956.95px;top:790.45px;width:19.30px;height:19.30px;background:#1f1f1f;border-radius:50%"></div>
<div style="position:absolute;left:956.60px;top:790.10px;width:20px;height:20px;line-height:20px;text-align:center;color:#fff;font-family:'Liberation Sans',sans-serif;font-size:14px;font-weight:700">G</div>
<div style="position:absolute;left:982.50px;top:790.45px;width:19.30px;height:19.30px;border:1.5px dashed #cbcbcb;border-radius:50%;box-sizing:border-box"></div>
<div style="position:absolute;left:982.15px;top:790.10px;width:20px;height:20px;line-height:20px;text-align:center;color:#d2d2d2;font-family:'Liberation Sans',sans-serif;font-size:14px">L</div>
<div style="position:absolute;left:1008.05px;top:790.45px;width:19.30px;height:19.30px;background:#65bc87;border-radius:50%"></div>
<div style="position:absolute;left:1007.70px;top:790.10px;width:20px;height:20px;line-height:20px;text-align:center;color:#fff;font-family:'Liberation Sans',sans-serif;font-size:14px;font-weight:700">1</div>
<div style="position:absolute;left:1033.60px;top:790.45px;width:19.30px;height:19.30px;background:#eab04c;border-radius:50%"></div>
<div style="position:absolute;left:1033.25px;top:790.10px;width:20px;height:20px;line-height:20px;text-align:center;color:#fff;font-family:'Liberation Sans',sans-serif;font-size:14px;font-weight:700">2</div>
<div style="position:absolute;left:1059.15px;top:790.45px;width:19.30px;height:19.30px;border:1.5px dashed #cbcbcb;border-radius:50%;box-sizing:border-box"></div>
<div style="position:absolute;left:1058.80px;top:790.10px;width:20px;height:20px;line-height:20px;text-align:center;color:#d2d2d2;font-family:'Liberation Sans',sans-serif;font-size:14px">3</div>
<div class="t" id="t41" style="left:116.18px;top:857.01px;font-size:21.3px;font-weight:400;color:#1e1e1e;letter-spacing:0.600px;-webkit-text-stroke:0.2px #1e1e1e;"><span class="z0">0</span>6</div>
<div style="position:absolute;left:187.80px;top:855.30px;width:23.50px;height:23.40px;border:1.8px solid #6e6e6e;border-radius:4px;box-sizing:border-box"></div>
<div class="t" id="t42" style="left:264.90px;top:857.01px;font-size:21.3px;font-weight:400;color:#1e1e1e;letter-spacing:0.100px;-webkit-text-stroke:0.2px #1e1e1e;">P<span class="z0">0</span><span class="z0">0</span><span class="z0">0</span>6</div>
<svg style="position:absolute;left:490.60px;top:851.60px;" width="29.76" height="29.76" viewBox="0 0 24 24"><path d="M20 2H4c-1.1 0-2 .9-2 2v18l4-4h14c1.1 0 2-.9 2-2V4c0-1.1-.9-2-2-2zm0 14H5.17L4 17.17V4h16v12zM7 9h2v2H7zm4 0h2v2h-2zm4 0h2v2h-2z" fill="#151515"/></svg>
<div class="t" id="t43" style="left:570.30px;top:857.01px;font-size:21.3px;font-weight:400;color:#1e1e1e;letter-spacing:0.350px;-webkit-text-stroke:0.2px #1e1e1e;"><span class="n1">1</span><span class="n1">1</span>:45, Today</div>
<div style="position:absolute;left:791.95px;top:856.45px;width:19.30px;height:19.30px;background:#1f1f1f;border-radius:50%"></div>
<div style="position:absolute;left:791.60px;top:856.10px;width:20px;height:20px;line-height:20px;text-align:center;color:#fff;font-family:'Liberation Sans',sans-serif;font-size:14px;font-weight:700">G</div>
<div style="position:absolute;left:817.50px;top:856.45px;width:19.30px;height:19.30px;background:#3553f2;border-radius:50%"></div>
<div style="position:absolute;left:817.15px;top:856.10px;width:20px;height:20px;line-height:20px;text-align:center;color:#fff;font-family:'Liberation Sans',sans-serif;font-size:14px;font-weight:700">L</div>
<div style="position:absolute;left:843.05px;top:856.45px;width:19.30px;height:19.30px;border:1.5px dashed #cbcbcb;border-radius:50%;box-sizing:border-box"></div>
<div style="position:absolute;left:842.70px;top:856.10px;width:20px;height:20px;line-height:20px;text-align:center;color:#d2d2d2;font-family:'Liberation Sans',sans-serif;font-size:14px">1</div>
<div style="position:absolute;left:868.60px;top:856.45px;width:19.30px;height:19.30px;background:#eab04c;border-radius:50%"></div>
<div style="position:absolute;left:868.25px;top:856.10px;width:20px;height:20px;line-height:20px;text-align:center;color:#fff;font-family:'Liberation Sans',sans-serif;font-size:14px;font-weight:700">2</div>
<div style="position:absolute;left:894.15px;top:856.45px;width:19.30px;height:19.30px;background:#9caaf8;border-radius:50%"></div>
<div style="position:absolute;left:893.80px;top:856.10px;width:20px;height:20px;line-height:20px;text-align:center;color:#fff;font-family:'Liberation Sans',sans-serif;font-size:14px;font-weight:700">3</div>
<div style="position:absolute;left:956.95px;top:856.45px;width:19.30px;height:19.30px;background:#1f1f1f;border-radius:50%"></div>
<div style="position:absolute;left:956.60px;top:856.10px;width:20px;height:20px;line-height:20px;text-align:center;color:#fff;font-family:'Liberation Sans',sans-serif;font-size:14px;font-weight:700">G</div>
<div style="position:absolute;left:982.50px;top:856.45px;width:19.30px;height:19.30px;background:#3553f2;border-radius:50%"></div>
<div style="position:absolute;left:982.15px;top:856.10px;width:20px;height:20px;line-height:20px;text-align:center;color:#fff;font-family:'Liberation Sans',sans-serif;font-size:14px;font-weight:700">L</div>
<div style="position:absolute;left:1008.05px;top:856.45px;width:19.30px;height:19.30px;border:1.5px dashed #cbcbcb;border-radius:50%;box-sizing:border-box"></div>
<div style="position:absolute;left:1007.70px;top:856.10px;width:20px;height:20px;line-height:20px;text-align:center;color:#d2d2d2;font-family:'Liberation Sans',sans-serif;font-size:14px">1</div>
<div style="position:absolute;left:1033.60px;top:856.45px;width:19.30px;height:19.30px;background:#eab04c;border-radius:50%"></div>
<div style="position:absolute;left:1033.25px;top:856.10px;width:20px;height:20px;line-height:20px;text-align:center;color:#fff;font-family:'Liberation Sans',sans-serif;font-size:14px;font-weight:700">2</div>
<div style="position:absolute;left:1059.15px;top:856.45px;width:19.30px;height:19.30px;background:#9caaf8;border-radius:50%"></div>
<div style="position:absolute;left:1058.80px;top:856.10px;width:20px;height:20px;line-height:20px;text-align:center;color:#fff;font-family:'Liberation Sans',sans-serif;font-size:14px;font-weight:700">3</div>
<div class="t" id="t44" style="left:116.18px;top:923.01px;font-size:21.3px;font-weight:400;color:#1e1e1e;letter-spacing:0.600px;-webkit-text-stroke:0.2px #1e1e1e;"><span class="z0">0</span>7</div>
<div style="position:absolute;left:187.80px;top:921.30px;width:23.50px;height:23.40px;border:1.8px solid #6e6e6e;border-radius:4px;box-sizing:border-box"></div>
<div class="t" id="t45" style="left:264.90px;top:923.01px;font-size:21.3px;font-weight:400;color:#1e1e1e;letter-spacing:0.100px;-webkit-text-stroke:0.2px #1e1e1e;">P<span class="z0">0</span><span class="z0">0</span><span class="z0">0</span>7</div>
<svg style="position:absolute;left:490.60px;top:917.60px;" width="29.76" height="29.76" viewBox="0 0 24 24"><path d="M20 2H4c-1.1 0-2 .9-2 2v18l4-4h14c1.1 0 2-.9 2-2V4c0-1.1-.9-2-2-2zm0 14H5.17L4 17.17V4h16v12zM7 9h2v2H7zm4 0h2v2h-2zm4 0h2v2h-2z" fill="#151515"/></svg>
<div class="t" id="t46" style="left:570.30px;top:923.01px;font-size:21.3px;font-weight:400;color:#1e1e1e;letter-spacing:0.350px;-webkit-text-stroke:0.2px #1e1e1e;"><span class="z0">0</span>3:43, Today</div>
<div style="position:absolute;left:791.95px;top:922.45px;width:19.30px;height:19.30px;background:#1f1f1f;border-radius:50%"></div>
<div style="position:absolute;left:791.60px;top:922.10px;width:20px;height:20px;line-height:20px;text-align:center;color:#fff;font-family:'Liberation Sans',sans-serif;font-size:14px;font-weight:700">G</div>
<div style="position:absolute;left:817.50px;top:922.45px;width:19.30px;height:19.30px;border:1.5px dashed #cbcbcb;border-radius:50%;box-sizing:border-box"></div>
<div style="position:absolute;left:817.15px;top:922.10px;width:20px;height:20px;line-height:20px;text-align:center;color:#d2d2d2;font-family:'Liberation Sans',sans-serif;font-size:14px">L</div>
<div style="position:absolute;left:843.05px;top:922.45px;width:19.30px;height:19.30px;background:#65bc87;border-radius:50%"></div>
<div style="position:absolute;left:842.70px;top:922.10px;width:20px;height:20px;line-height:20px;text-align:center;color:#fff;font-family:'Liberation Sans',sans-serif;font-size:14px;font-weight:700">1</div>
<div style="position:absolute;left:868.60px;top:922.45px;width:19.30px;height:19.30px;background:#eab04c;border-radius:50%"></div>
<div style="position:absolute;left:868.25px;top:922.10px;width:20px;height:20px;line-height:20px;text-align:center;color:#fff;font-family:'Liberation Sans',sans-serif;font-size:14px;font-weight:700">2</div>
<div style="position:absolute;left:894.15px;top:922.45px;width:19.30px;height:19.30px;border:1.5px dashed #cbcbcb;border-radius:50%;box-sizing:border-box"></div>
<div style="position:absolute;left:893.80px;top:922.10px;width:20px;height:20px;line-height:20px;text-align:center;color:#d2d2d2;font-family:'Liberation Sans',sans-serif;font-size:14px">3</div>
<div style="position:absolute;left:956.95px;top:922.45px;width:19.30px;height:19.30px;background:#1f1f1f;border-radius:50%"></div>
<div style="position:absolute;left:956.60px;top:922.10px;width:20px;height:20px;line-height:20px;text-align:center;color:#fff;font-family:'Liberation Sans',sans-serif;font-size:14px;font-weight:700">G</div>
<div style="position:absolute;left:982.50px;top:922.45px;width:19.30px;height:19.30px;border:1.5px dashed #cbcbcb;border-radius:50%;box-sizing:border-box"></div>
<div style="position:absolute;left:982.15px;top:922.10px;width:20px;height:20px;line-height:20px;text-align:center;color:#d2d2d2;font-family:'Liberation Sans',sans-serif;font-size:14px">L</div>
<div style="position:absolute;left:1008.05px;top:922.45px;width:19.30px;height:19.30px;background:#65bc87;border-radius:50%"></div>
<div style="position:absolute;left:1007.70px;top:922.10px;width:20px;height:20px;line-height:20px;text-align:center;color:#fff;font-family:'Liberation Sans',sans-serif;font-size:14px;font-weight:700">1</div>
<div style="position:absolute;left:1033.60px;top:922.45px;width:19.30px;height:19.30px;background:#eab04c;border-radius:50%"></div>
<div style="position:absolute;left:1033.25px;top:922.10px;width:20px;height:20px;line-height:20px;text-align:center;color:#fff;font-family:'Liberation Sans',sans-serif;font-size:14px;font-weight:700">2</div>
<div style="position:absolute;left:1059.15px;top:922.45px;width:19.30px;height:19.30px;border:1.5px dashed #cbcbcb;border-radius:50%;box-sizing:border-box"></div>
<div style="position:absolute;left:1058.80px;top:922.10px;width:20px;height:20px;line-height:20px;text-align:center;color:#d2d2d2;font-family:'Liberation Sans',sans-serif;font-size:14px">3</div>
<div class="t" id="t47" style="left:116.18px;top:989.01px;font-size:21.3px;font-weight:400;color:#1e1e1e;letter-spacing:0.600px;-webkit-text-stroke:0.2px #1e1e1e;"><span class="z0">0</span>8</div>
<div style="position:absolute;left:187.80px;top:987.30px;width:23.50px;height:23.40px;border:1.8px solid #6e6e6e;border-radius:4px;box-sizing:border-box"></div>
<div class="t" id="t48" style="left:264.90px;top:989.01px;font-size:21.3px;font-weight:400;color:#1e1e1e;letter-spacing:0.100px;-webkit-text-stroke:0.2px #1e1e1e;">P<span class="z0">0</span><span class="z0">0</span><span class="z0">0</span>8</div>
<svg style="position:absolute;left:490.60px;top:983.60px;" width="29.76" height="29.76" viewBox="0 0 24 24"><path d="M20 2H4c-1.1 0-2 .9-2 2v18l4-4h14c1.1 0 2-.9 2-2V4c0-1.1-.9-2-2-2zm0 14H5.17L4 17.17V4h16v12zM7 9h2v2H7zm4 0h2v2h-2zm4 0h2v2h-2z" fill="#151515"/></svg>
<div class="t" id="t49" style="left:570.30px;top:989.01px;font-size:21.3px;font-weight:400;color:#1e1e1e;letter-spacing:0.350px;-webkit-text-stroke:0.2px #1e1e1e;"><span class="n1">1</span>3:22, Today</div>
<div style="position:absolute;left:791.95px;top:988.45px;width:19.30px;height:19.30px;background:#1f1f1f;border-radius:50%"></div>
<div style="position:absolute;left:791.60px;top:988.10px;width:20px;height:20px;line-height:20px;text-align:center;color:#fff;font-family:'Liberation Sans',sans-serif;font-size:14px;font-weight:700">G</div>
<div style="position:absolute;left:817.50px;top:988.45px;width:19.30px;height:19.30px;background:#3553f2;border-radius:50%"></div>
<div style="position:absolute;left:817.15px;top:988.10px;width:20px;height:20px;line-height:20px;text-align:center;color:#fff;font-family:'Liberation Sans',sans-serif;font-size:14px;font-weight:700">L</div>
<div style="position:absolute;left:843.05px;top:988.45px;width:19.30px;height:19.30px;border:1.5px dashed #cbcbcb;border-radius:50%;box-sizing:border-box"></div>
<div style="position:absolute;left:842.70px;top:988.10px;width:20px;height:20px;line-height:20px;text-align:center;color:#d2d2d2;font-family:'Liberation Sans',sans-serif;font-size:14px">1</div>
<div style="position:absolute;left:868.60px;top:988.45px;width:19.30px;height:19.30px;background:#eab04c;border-radius:50%"></div>
<div style="position:absolute;left:868.25px;top:988.10px;width:20px;height:20px;line-height:20px;text-align:center;color:#fff;font-family:'Liberation Sans',sans-serif;font-size:14px;font-weight:700">2</div>
<div style="position:absolute;left:894.15px;top:988.45px;width:19.30px;height:19.30px;background:#9caaf8;border-radius:50%"></div>
<div style="position:absolute;left:893.80px;top:988.10px;width:20px;height:20px;line-height:20px;text-align:center;color:#fff;font-family:'Liberation Sans',sans-serif;font-size:14px;font-weight:700">3</div>
<div style="position:absolute;left:956.95px;top:988.45px;width:19.30px;height:19.30px;background:#1f1f1f;border-radius:50%"></div>
<div style="position:absolute;left:956.60px;top:988.10px;width:20px;height:20px;line-height:20px;text-align:center;color:#fff;font-family:'Liberation Sans',sans-serif;font-size:14px;font-weight:700">G</div>
<div style="position:absolute;left:982.50px;top:988.45px;width:19.30px;height:19.30px;background:#3553f2;border-radius:50%"></div>
<div style="position:absolute;left:982.15px;top:988.10px;width:20px;height:20px;line-height:20px;text-align:center;color:#fff;font-family:'Liberation Sans',sans-serif;font-size:14px;font-weight:700">L</div>
<div style="position:absolute;left:1008.05px;top:988.45px;width:19.30px;height:19.30px;border:1.5px dashed #cbcbcb;border-radius:50%;box-sizing:border-box"></div>
<div style="position:absolute;left:1007.70px;top:988.10px;width:20px;height:20px;line-height:20px;text-align:center;color:#d2d2d2;font-family:'Liberation Sans',sans-serif;font-size:14px">1</div>
<div style="position:absolute;left:1033.60px;top:988.45px;width:19.30px;height:19.30px;background:#eab04c;border-radius:50%"></div>
<div style="position:absolute;left:1033.25px;top:988.10px;width:20px;height:20px;line-height:20px;text-align:center;color:#fff;font-family:'Liberation Sans',sans-serif;font-size:14px;font-weight:700">2</div>
<div style="position:absolute;left:1059.15px;top:988.45px;width:19.30px;height:19.30px;background:#9caaf8;border-radius:50%"></div>
<div style="position:absolute;left:1058.80px;top:988.10px;width:20px;height:20px;line-height:20px;text-align:center;color:#fff;font-family:'Liberation Sans',sans-serif;font-size:14px;font-weight:700">3</div>
<div class="t" id="t50" style="left:116.18px;top:1055.01px;font-size:21.3px;font-weight:400;color:#1e1e1e;letter-spacing:0.600px;-webkit-text-stroke:0.2px #1e1e1e;"><span class="z0">0</span>9</div>
<div style="position:absolute;left:187.80px;top:1053.30px;width:23.50px;height:23.40px;border:1.8px solid #6e6e6e;border-radius:4px;box-sizing:border-box"></div>
<div class="t" id="t51" style="left:264.90px;top:1055.01px;font-size:21.3px;font-weight:400;color:#1e1e1e;letter-spacing:0.100px;-webkit-text-stroke:0.2px #1e1e1e;">P<span class="z0">0</span><span class="z0">0</span><span class="z0">0</span>9</div>
<svg style="position:absolute;left:490.60px;top:1049.60px;" width="29.76" height="29.76" viewBox="0 0 24 24"><path d="M20 2H4c-1.1 0-2 .9-2 2v18l4-4h14c1.1 0 2-.9 2-2V4c0-1.1-.9-2-2-2zm0 14H5.17L4 17.17V4h16v12zM7 9h2v2H7zm4 0h2v2h-2zm4 0h2v2h-2z" fill="#151515"/></svg>
<div class="t" id="t52" style="left:570.30px;top:1055.01px;font-size:21.3px;font-weight:400;color:#1e1e1e;letter-spacing:0.350px;-webkit-text-stroke:0.2px #1e1e1e;"><span class="n1">1</span>6:57, Today</div>
<div style="position:absolute;left:791.95px;top:1054.45px;width:19.30px;height:19.30px;background:#1f1f1f;border-radius:50%"></div>
<div style="position:absolute;left:791.60px;top:1054.10px;width:20px;height:20px;line-height:20px;text-align:center;color:#fff;font-family:'Liberation Sans',sans-serif;font-size:14px;font-weight:700">G</div>
<div style="position:absolute;left:817.50px;top:1054.45px;width:19.30px;height:19.30px;background:#3553f2;border-radius:50%"></div>
<div style="position:absolute;left:817.15px;top:1054.10px;width:20px;height:20px;line-height:20px;text-align:center;color:#fff;font-family:'Liberation Sans',sans-serif;font-size:14px;font-weight:700">L</div>
<div style="position:absolute;left:843.05px;top:1054.45px;width:19.30px;height:19.30px;border:1.5px dashed #cbcbcb;border-radius:50%;box-sizing:border-box"></div>
<div style="position:absolute;left:842.70px;top:1054.10px;width:20px;height:20px;line-height:20px;text-align:center;color:#d2d2d2;font-family:'Liberation Sans',sans-serif;font-size:14px">1</div>
<div style="position:absolute;left:868.60px;top:1054.45px;width:19.30px;height:19.30px;background:#eab04c;border-radius:50%"></div>
<div style="position:absolute;left:868.25px;top:1054.10px;width:20px;height:20px;line-height:20px;text-align:center;color:#fff;font-family:'Liberation Sans',sans-serif;font-size:14px;font-weight:700">2</div>
<div style="position:absolute;left:894.15px;top:1054.45px;width:19.30px;height:19.30px;background:#9caaf8;border-radius:50%"></div>
<div style="position:absolute;left:893.80px;top:1054.10px;width:20px;height:20px;line-height:20px;text-align:center;color:#fff;font-family:'Liberation Sans',sans-serif;font-size:14px;font-weight:700">3</div>
<div style="position:absolute;left:956.95px;top:1054.45px;width:19.30px;height:19.30px;background:#1f1f1f;border-radius:50%"></div>
<div style="position:absolute;left:956.60px;top:1054.10px;width:20px;height:20px;line-height:20px;text-align:center;color:#fff;font-family:'Liberation Sans',sans-serif;font-size:14px;font-weight:700">G</div>
<div style="position:absolute;left:982.50px;top:1054.45px;width:19.30px;height:19.30px;border:1.5px dashed #cbcbcb;border-radius:50%;box-sizing:border-box"></div>
<div style="position:absolute;left:982.15px;top:1054.10px;width:20px;height:20px;line-height:20px;text-align:center;color:#d2d2d2;font-family:'Liberation Sans',sans-serif;font-size:14px">L</div>
<div style="position:absolute;left:1008.05px;top:1054.45px;width:19.30px;height:19.30px;background:#65bc87;border-radius:50%"></div>
<div style="position:absolute;left:1007.70px;top:1054.10px;width:20px;height:20px;line-height:20px;text-align:center;color:#fff;font-family:'Liberation Sans',sans-serif;font-size:14px;font-weight:700">1</div>
<div style="position:absolute;left:1033.60px;top:1054.45px;width:19.30px;height:19.30px;background:#eab04c;border-radius:50%"></div>
<div style="position:absolute;left:1033.25px;top:1054.10px;width:20px;height:20px;line-height:20px;text-align:center;color:#fff;font-family:'Liberation Sans',sans-serif;font-size:14px;font-weight:700">2</div>
<div style="position:absolute;left:1059.15px;top:1054.45px;width:19.30px;height:19.30px;border:1.5px dashed #cbcbcb;border-radius:50%;box-sizing:border-box"></div>
<div style="position:absolute;left:1058.80px;top:1054.10px;width:20px;height:20px;line-height:20px;text-align:center;color:#d2d2d2;font-family:'Liberation Sans',sans-serif;font-size:14px">3</div>
<div class="t" id="t53" style="left:118.62px;top:1121.01px;font-size:21.3px;font-weight:400;color:#1e1e1e;letter-spacing:0.600px;-webkit-text-stroke:0.2px #1e1e1e;"><span class="n1">1</span><span class="z0">0</span></div>
<div style="position:absolute;left:187.80px;top:1119.30px;width:23.50px;height:23.40px;border:1.8px solid #6e6e6e;border-radius:4px;box-sizing:border-box"></div>
<div class="t" id="t54" style="left:264.90px;top:1121.01px;font-size:21.3px;font-weight:400;color:#1e1e1e;letter-spacing:0.100px;-webkit-text-stroke:0.2px #1e1e1e;">P<span class="z0">0</span><span class="z0">0</span><span class="n1">1</span><span class="z0">0</span></div>
<svg style="position:absolute;left:490.60px;top:1115.60px;" width="29.76" height="29.76" viewBox="0 0 24 24"><path d="M20 2H4c-1.1 0-2 .9-2 2v18l4-4h14c1.1 0 2-.9 2-2V4c0-1.1-.9-2-2-2zm0 14H5.17L4 17.17V4h16v12zM7 9h2v2H7zm4 0h2v2h-2zm4 0h2v2h-2z" fill="#151515"/></svg>
<div class="t" id="t55" style="left:570.30px;top:1121.01px;font-size:21.3px;font-weight:400;color:#1e1e1e;letter-spacing:0.350px;-webkit-text-stroke:0.2px #1e1e1e;"><span class="n1">1</span>9:2<span class="z0">0</span>, Today</div>
<div style="position:absolute;left:791.95px;top:1120.45px;width:19.30px;height:19.30px;background:#1f1f1f;border-radius:50%"></div>
<div style="position:absolute;left:791.60px;top:1120.10px;width:20px;height:20px;line-height:20px;text-align:center;color:#fff;font-family:'Liberation Sans',sans-serif;font-size:14px;font-weight:700">G</div>
<div style="position:absolute;left:817.50px;top:1120.45px;width:19.30px;height:19.30px;border:1.5px dashed #cbcbcb;border-radius:50%;box-sizing:border-box"></div>
<div style="position:absolute;left:817.15px;top:1120.10px;width:20px;height:20px;line-height:20px;text-align:center;color:#d2d2d2;font-family:'Liberation Sans',sans-serif;font-size:14px">L</div>
<div style="position:absolute;left:843.05px;top:1120.45px;width:19.30px;height:19.30px;background:#65bc87;border-radius:50%"></div>
<div style="position:absolute;left:842.70px;top:1120.10px;width:20px;height:20px;line-height:20px;text-align:center;color:#fff;font-family:'Liberation Sans',sans-serif;font-size:14px;font-weight:700">1</div>
<div style="position:absolute;left:868.60px;top:1120.45px;width:19.30px;height:19.30px;background:#eab04c;border-radius:50%"></div>
<div style="position:absolute;left:868.25px;top:1120.10px;width:20px;height:20px;line-height:20px;text-align:center;color:#fff;font-family:'Liberation Sans',sans-serif;font-size:14px;font-weight:700">2</div>
<div style="position:absolute;left:894.15px;top:1120.45px;width:19.30px;height:19.30px;border:1.5px dashed #cbcbcb;border-radius:50%;box-sizing:border-box"></div>
<div style="position:absolute;left:893.80px;top:1120.10px;width:20px;height:20px;line-height:20px;text-align:center;color:#d2d2d2;font-family:'Liberation Sans',sans-serif;font-size:14px">3</div>
<div style="position:absolute;left:956.95px;top:1120.45px;width:19.30px;height:19.30px;background:#1f1f1f;border-radius:50%"></div>
<div style="position:absolute;left:956.60px;top:1120.10px;width:20px;height:20px;line-height:20px;text-align:center;color:#fff;font-family:'Liberation Sans',sans-serif;font-size:14px;font-weight:700">G</div>
<div style="position:absolute;left:982.50px;top:1120.45px;width:19.30px;height:19.30px;border:1.5px dashed #cbcbcb;border-radius:50%;box-sizing:border-box"></div>
<div style="position:absolute;left:982.15px;top:1120.10px;width:20px;height:20px;line-height:20px;text-align:center;color:#d2d2d2;font-family:'Liberation Sans',sans-serif;font-size:14px">L</div>
<div style="position:absolute;left:1008.05px;top:1120.45px;width:19.30px;height:19.30px;background:#65bc87;border-radius:50%"></div>
<div style="position:absolute;left:1007.70px;top:1120.10px;width:20px;height:20px;line-height:20px;text-align:center;color:#fff;font-family:'Liberation Sans',sans-serif;font-size:14px;font-weight:700">1</div>
<div style="position:absolute;left:1033.60px;top:1120.45px;width:19.30px;height:19.30px;background:#eab04c;border-radius:50%"></div>
<div style="position:absolute;left:1033.25px;top:1120.10px;width:20px;height:20px;line-height:20px;text-align:center;color:#fff;font-family:'Liberation Sans',sans-serif;font-size:14px;font-weight:700">2</div>
<div style="position:absolute;left:1059.15px;top:1120.45px;width:19.30px;height:19.30px;border:1.5px dashed #cbcbcb;border-radius:50%;box-sizing:border-box"></div>
<div style="position:absolute;left:1058.80px;top:1120.10px;width:20px;height:20px;line-height:20px;text-align:center;color:#d2d2d2;font-family:'Liberation Sans',sans-serif;font-size:14px">3</div>
<div class="t" id="t56" style="left:122.22px;top:1187.01px;font-size:21.3px;font-weight:400;color:#1e1e1e;letter-spacing:0.600px;-webkit-text-stroke:0.2px #1e1e1e;"><span class="n1">1</span><span class="n1">1</span></div>
<div style="position:absolute;left:187.80px;top:1185.30px;width:23.50px;height:23.40px;border:1.8px solid #6e6e6e;border-radius:4px;box-sizing:border-box"></div>
<div class="t" id="t57" style="left:264.90px;top:1187.01px;font-size:21.3px;font-weight:400;color:#1e1e1e;letter-spacing:0.100px;-webkit-text-stroke:0.2px #1e1e1e;">P<span class="z0">0</span><span class="z0">0</span><span class="n1">1</span><span class="n1">1</span></div>
<svg style="position:absolute;left:490.60px;top:1181.60px;" width="29.76" height="29.76" viewBox="0 0 24 24"><path d="M20 2H4c-1.1 0-2 .9-2 2v18l4-4h14c1.1 0 2-.9 2-2V4c0-1.1-.9-2-2-2zm0 14H5.17L4 17.17V4h16v12zM7 9h2v2H7zm4 0h2v2h-2zm4 0h2v2h-2z" fill="#151515"/></svg>
<div class="t" id="t58" style="left:570.30px;top:1187.01px;font-size:21.3px;font-weight:400;color:#1e1e1e;letter-spacing:0.350px;-webkit-text-stroke:0.2px #1e1e1e;"><span class="n1">1</span>3:57, Today</div>
<div style="position:absolute;left:791.95px;top:1186.45px;width:19.30px;height:19.30px;background:#1f1f1f;border-radius:50%"></div>
<div style="position:absolute;left:791.60px;top:1186.10px;width:20px;height:20px;line-height:20px;text-align:center;color:#fff;font-family:'Liberation Sans',sans-serif;font-size:14px;font-weight:700">G</div>
<div style="position:absolute;left:817.50px;top:1186.45px;width:19.30px;height:19.30px;border:1.5px dashed #cbcbcb;border-radius:50%;box-sizing:border-box"></div>
<div style="position:absolute;left:817.15px;top:1186.10px;width:20px;height:20px;line-height:20px;text-align:center;color:#d2d2d2;font-family:'Liberation Sans',sans-serif;font-size:14px">L</div>
<div style="position:absolute;left:843.05px;top:1186.45px;width:19.30px;height:19.30px;background:#65bc87;border-radius:50%"></div>
<div style="position:absolute;left:842.70px;top:1186.10px;width:20px;height:20px;line-height:20px;text-align:center;color:#fff;font-family:'Liberation Sans',sans-serif;font-size:14px;font-weight:700">1</div>
<div style="position:absolute;left:868.60px;top:1186.45px;width:19.30px;height:19.30px;background:#eab04c;border-radius:50%"></div>
<div style="position:absolute;left:868.25px;top:1186.10px;width:20px;height:20px;line-height:20px;text-align:center;color:#fff;font-family:'Liberation Sans',sans-serif;font-size:14px;font-weight:700">2</div>
<div style="position:absolute;left:894.15px;top:1186.45px;width:19.30px;height:19.30px;border:1.5px dashed #cbcbcb;border-radius:50%;box-sizing:border-box"></div>
<div style="position:absolute;left:893.80px;top:1186.10px;width:20px;height:20px;line-height:20px;text-align:center;color:#d2d2d2;font-family:'Liberation Sans',sans-serif;font-size:14px">3</div>
<div style="position:absolute;left:956.95px;top:1186.45px;width:19.30px;height:19.30px;background:#1f1f1f;border-radius:50%"></div>
<div style="position:absolute;left:956.60px;top:1186.10px;width:20px;height:20px;line-height:20px;text-align:center;color:#fff;font-family:'Liberation Sans',sans-serif;font-size:14px;font-weight:700">G</div>
<div style="position:absolute;left:982.50px;top:1186.45px;width:19.30px;height:19.30px;background:#3553f2;border-radius:50%"></div>
<div style="position:absolute;left:982.15px;top:1186.10px;width:20px;height:20px;line-height:20px;text-align:center;color:#fff;font-family:'Liberation Sans',sans-serif;font-size:14px;font-weight:700">L</div>
<div style="position:absolute;left:1008.05px;top:1186.45px;width:19.30px;height:19.30px;border:1.5px dashed #cbcbcb;border-radius:50%;box-sizing:border-box"></div>
<div style="position:absolute;left:1007.70px;top:1186.10px;width:20px;height:20px;line-height:20px;text-align:center;color:#d2d2d2;font-family:'Liberation Sans',sans-serif;font-size:14px">1</div>
<div style="position:absolute;left:1033.60px;top:1186.45px;width:19.30px;height:19.30px;background:#eab04c;border-radius:50%"></div>
<div style="position:absolute;left:1033.25px;top:1186.10px;width:20px;height:20px;line-height:20px;text-align:center;color:#fff;font-family:'Liberation Sans',sans-serif;font-size:14px;font-weight:700">2</div>
<div style="position:absolute;left:1059.15px;top:1186.45px;width:19.30px;height:19.30px;background:#9caaf8;border-radius:50%"></div>
<div style="position:absolute;left:1058.80px;top:1186.10px;width:20px;height:20px;line-height:20px;text-align:center;color:#fff;font-family:'Liberation Sans',sans-serif;font-size:14px;font-weight:700">3</div>
<div style="position:absolute;left:1391.00px;top:186.00px;width:10.00px;height:1064.00px;background:linear-gradient(90deg,rgba(0,0,0,0) 0px,rgba(0,0,0,0.025) 5px,rgba(0,0,0,0.06) 10px)"></div>
<div style="position:absolute;left:1401.00px;top:186.00px;width:570.00px;height:1064.00px;background:#fff"></div>
<div style="position:absolute;left:1401.00px;top:186.00px;width:570.00px;height:246.00px;background:#f7f7f7"></div>
<div style="position:absolute;left:1401.00px;top:186.00px;width:570.00px;height:14.00px;background:linear-gradient(#e9e9e9,#f7f7f7)"></div>
<svg style="position:absolute;left:1434.00px;top:221.00px;" width="24.00" height="24.00" viewBox="0 0 24 24"><path d="M3.2 3.1 L20.8 19.6 M20.8 3.1 L3.2 19.6" stroke="#1a1a1a" stroke-width="2.3"/></svg>
<svg style="position:absolute;left:1905.10px;top:218.20px;" width="30.24" height="30.24" viewBox="0 0 24 24"><path d="M20 2H4c-1.1 0-2 .9-2 2v18l4-4h14c1.1 0 2-.9 2-2V4c0-1.1-.9-2-2-2zm0 14H5.17L4 17.17V4h16v12zM7 9h2v2H7zm4 0h2v2h-2zm4 0h2v2h-2z" fill="#151515"/></svg>
<div class="t" id="t59" style="left:1437.50px;top:270.00px;font-size:28.12px;font-weight:400;color:#1e1e1e;letter-spacing:0.600px;-webkit-text-stroke:0.9px #1e1e1e;">P<span class="z0">0</span><span class="z0">0</span><span class="z0">0</span>4</div>
<div class="t" id="t60" style="left:1437.50px;top:339.00px;font-size:18.84px;font-weight:400;color:#9c9c9c;letter-spacing:-0.107px;-webkit-text-stroke:0.25px #9c9c9c;">Last seen</div>
<div class="t" id="t61" style="left:1437.50px;top:374.01px;font-size:20.0px;font-weight:400;color:#1e1e1e;letter-spacing:-0.522px;-webkit-text-stroke:0.3px #1e1e1e;">08:22 Today</div>
<div style="position:absolute;left:1590.20px;top:336.40px;width:1.50px;height:52.00px;background:#dcdcdc"></div>
<div class="t" id="t62" style="left:1638.30px;top:339.00px;font-size:18.84px;font-weight:400;color:#9c9c9c;letter-spacing:-0.113px;-webkit-text-stroke:0.25px #9c9c9c;">Device</div>
<div class="t" id="t63" style="left:1638.30px;top:374.01px;font-size:20.0px;font-weight:400;color:#1e1e1e;letter-spacing:-0.325px;-webkit-text-stroke:0.3px #1e1e1e;">vivosmart 4</div>
<div class="t" id="t64" style="left:1437.50px;top:471.00px;font-size:25.07px;font-weight:400;color:#1e1e1e;letter-spacing:-0.671px;-webkit-text-stroke:0.45px #1e1e1e;">Monday, 1 May, 2<span class="z0">0</span>22</div>
<div style="position:absolute;left:1437.80px;top:524.40px;width:496.50px;height:499.00px;border:1.5px solid #dedede;border-radius:12px;box-sizing:border-box;background:#fff"></div>
<svg style="position:absolute;left:1461.00px;top:547.10px;" width="35.80" height="36.30" viewBox="0 0 35.8 36.3"><defs><clipPath id="gc"><rect width="35.8" height="36.3" rx="5"/></clipPath></defs>
<g clip-path="url(#gc)"><rect width="35.8" height="36.3" fill="#4b4b4b"/>
<path d="M0 0 H35.8 V5 L0 15.6 Z" fill="#16aeea"/>
<path d="M24.6 19.5 A7.5 7.5 0 1 0 24.6 26.5" fill="none" stroke="#16aeea" stroke-width="3.2"/>
<path d="M5 11.5 L26 4.5" stroke="#3b6a80" stroke-width="1.6" stroke-dasharray="1.5 1"/>
</g></svg>
<div style="position:absolute;left:1514.90px;top:551.20px;width:19.40px;height:19.40px;background:#1f1f1f;border-radius:50%"></div>
<div style="position:absolute;left:1514.6px;top:550.90px;width:20px;height:20px;line-height:20px;text-align:center;color:#fff;font-family:'Liberation Sans',sans-serif;font-size:14px;font-weight:700">G</div>
<div class="t" id="t65" style="left:1544.30px;top:551.01px;font-size:21.74px;font-weight:700;color:#1e1e1e;letter-spacing:-0.210px;">Garmin Connect App</div>
<div style="position:absolute;left:1767.00px;top:549.80px;width:22.40px;height:22.40px;background:#c6cef9;border-radius:50%"></div>
<div style="position:absolute;left:1767px;top:549.80px;width:22.4px;height:22.4px;line-height:22.4px;text-align:center;color:#fff;font-family:'Liberation Sans',sans-serif;font-size:15px;font-weight:700">?</div>
<div style="position:absolute;left:1514.80px;top:590.40px;width:10.80px;height:10.80px;background:#5db884"></div>
<div class="t" id="t66" style="left:1535.50px;top:586.01px;font-size:18.99px;font-weight:400;color:#1e1e1e;letter-spacing:0.209px;-webkit-text-stroke:0.3px #1e1e1e;">7 / 8 Metric Collected</div>
<div style="position:absolute;left:1461.00px;top:624.00px;width:449.70px;height:1.50px;background:#eaeaea"></div>
<div style="position:absolute;left:1461.00px;top:650.40px;width:10.90px;height:10.60px;background:#5db884"></div>
<div class="t" id="t67" style="left:1481.30px;top:648.00px;font-size:17.97px;font-weight:400;color:#1e1e1e;letter-spacing:0.350px;-webkit-text-stroke:0.3px #1e1e1e;">Daily Summary</div>
<div class="t" id="t68" style="left:1828.70px;top:648.00px;font-size:17.97px;font-weight:400;color:#5db884;letter-spacing:0.893px;-webkit-text-stroke:0.2px #5db884;">Collected</div>
<div style="position:absolute;left:1461.00px;top:678.00px;width:449.70px;height:1.50px;background:#ebebeb"></div>
<div style="position:absolute;left:1461.00px;top:698.40px;width:10.90px;height:10.60px;background:#5db884"></div>
<div class="t" id="t69" style="left:1481.30px;top:696.00px;font-size:17.97px;font-weight:400;color:#1e1e1e;letter-spacing:0.350px;-webkit-text-stroke:0.3px #1e1e1e;">Activity Summary</div>
<div class="t" id="t70" style="left:1828.70px;top:696.00px;font-size:17.97px;font-weight:400;color:#5db884;letter-spacing:0.893px;-webkit-text-stroke:0.2px #5db884;">Collected</div>
<div style="position:absolute;left:1461.00px;top:726.00px;width:449.70px;height:1.50px;background:#ebebeb"></div>
<div style="position:absolute;left:1461.00px;top:746.40px;width:10.90px;height:10.60px;background:#5db884"></div>
<div class="t" id="t71" style="left:1481.30px;top:744.00px;font-size:17.97px;font-weight:400;color:#1e1e1e;letter-spacing:0.350px;-webkit-text-stroke:0.3px #1e1e1e;">Sleep</div>
<div class="t" id="t72" style="left:1828.70px;top:744.00px;font-size:17.97px;font-weight:400;color:#5db884;letter-spacing:0.893px;-webkit-text-stroke:0.2px #5db884;">Collected</div>
<div style="position:absolute;left:1461.00px;top:774.00px;width:449.70px;height:1.50px;background:#ebebeb"></div>
<div style="position:absolute;left:1461.00px;top:794.40px;width:10.90px;height:10.60px;background:#5db884"></div>
<div class="t" id="t73" style="left:1481.30px;top:792.00px;font-size:17.97px;font-weight:400;color:#1e1e1e;letter-spacing:0.350px;-webkit-text-stroke:0.3px #1e1e1e;">Heart Rate</div>
<div class="t" id="t74" style="left:1828.70px;top:792.00px;font-size:17.97px;font-weight:400;color:#5db884;letter-spacing:0.893px;-webkit-text-stroke:0.2px #5db884;">Collected</div>
<div style="position:absolute;left:1461.00px;top:822.00px;width:449.70px;height:1.50px;background:#ebebeb"></div>
<div style="position:absolute;left:1461.00px;top:842.40px;width:10.90px;height:10.60px;background:#5db884"></div>
<div class="t" id="t75" style="left:1481.30px;top:840.00px;font-size:17.97px;font-weight:400;color:#1e1e1e;letter-spacing:0.350px;-webkit-text-stroke:0.3px #1e1e1e;">Stress</div>
<div class="t" id="t76" style="left:1828.70px;top:840.00px;font-size:17.97px;font-weight:400;color:#5db884;letter-spacing:0.893px;-webkit-text-stroke:0.2px #5db884;">Collected</div>
<div style="position:absolute;left:1461.00px;top:870.00px;width:449.70px;height:1.50px;background:#ebebeb"></div>
<div style="position:absolute;left:1461.00px;top:890.40px;width:10.90px;height:10.60px;background:#5db884"></div>
<div class="t" id="t77" style="left:1481.30px;top:888.00px;font-size:17.97px;font-weight:400;color:#1e1e1e;letter-spacing:0.350px;-webkit-text-stroke:0.3px #1e1e1e;">Steps</div>
<div class="t" id="t78" style="left:1828.70px;top:888.00px;font-size:17.97px;font-weight:400;color:#5db884;letter-spacing:0.893px;-webkit-text-stroke:0.2px #5db884;">Collected</div>
<div style="position:absolute;left:1461.00px;top:918.00px;width:449.70px;height:1.50px;background:#ebebeb"></div>
<div style="position:absolute;left:1461.00px;top:938.40px;width:10.90px;height:10.60px;background:#5db884"></div>
<div class="t" id="t79" style="left:1481.30px;top:936.00px;font-size:17.97px;font-weight:400;color:#1e1e1e;letter-spacing:0.350px;-webkit-text-stroke:0.3px #1e1e1e;">Respiration</div>
<div class="t" id="t80" style="left:1828.70px;top:936.00px;font-size:17.97px;font-weight:400;color:#5db884;letter-spacing:0.893px;-webkit-text-stroke:0.2px #5db884;">Collected</div>
<div style="position:absolute;left:1461.00px;top:966.00px;width:449.70px;height:1.50px;background:#ebebeb"></div>
<div style="position:absolute;left:1461.00px;top:986.40px;width:10.90px;height:10.60px;background:#d6d6d6"></div>
<div class="t" id="t81" style="left:1481.30px;top:984.00px;font-size:17.97px;font-weight:400;color:#a6a6a6;letter-spacing:0.350px;-webkit-text-stroke:0.3px #a6a6a6;">Oxygen Saturation</div>
<div style="position:absolute;left:1892.50px;top:991.50px;width:7.80px;height:1.60px;background:#1e1e1e"></div>
<div style="position:absolute;left:1902.90px;top:991.50px;width:7.80px;height:1.60px;background:#1e1e1e"></div>
<div style="position:absolute;left:1437.80px;top:1040.50px;width:496.50px;height:259.50px;border:1.5px solid #dedede;border-radius:12px;box-sizing:border-box;background:#fff"></div>
<div style="position:absolute;left:1461.00px;top:1063.20px;width:35.80px;height:36.30px;background:#3556f0;border-radius:6px"></div>
<svg style="position:absolute;left:1461.00px;top:1063.20px;" width="35.80" height="36.30" viewBox="0 0 35.8 36.3"><path d="M12 9.5 V25.6 H21" fill="none" stroke="#fff" stroke-width="3.2"/><path d="M23.2 27.5 V13.5 C23.2 10.5 24.7 8.8 27.8 8.8" fill="none" stroke="#fff" stroke-width="3"/><path d="M21 15.6 H27.5" stroke="#fff" stroke-width="2.6"/></svg>
<div style="position:absolute;left:1514.90px;top:1067.30px;width:19.40px;height:19.40px;background:#3553f2;border-radius:50%"></div>
<div style="position:absolute;left:1514.6px;top:1067.00px;width:20px;height:20px;line-height:20px;text-align:center;color:#fff;font-family:'Liberation Sans',sans-serif;font-size:14px;font-weight:700">L</div>
<div class="t" id="t82" style="left:1544.30px;top:1067.01px;font-size:21.74px;font-weight:700;color:#1e1e1e;letter-spacing:-0.247px;">Labfront Companion App</div>
<div style="position:absolute;left:1810.60px;top:1065.90px;width:22.40px;height:22.40px;background:#c6cef9;border-radius:50%"></div>
<div style="position:absolute;left:1810.6px;top:1065.90px;width:22.4px;height:22.4px;line-height:22.4px;text-align:center;color:#fff;font-family:'Liberation Sans',sans-serif;font-size:15px;font-weight:700">?</div>
<div style="position:absolute;left:1514.80px;top:1106.50px;width:10.80px;height:10.80px;background:#5db884"></div>
<div class="t" id="t83" style="left:1535.50px;top:1102.00px;font-size:18.99px;font-weight:400;color:#1e1e1e;letter-spacing:0.209px;-webkit-text-stroke:0.3px #1e1e1e;">6 / 8 Metric Collected</div>
<div style="position:absolute;left:1461.00px;top:1140.10px;width:449.70px;height:1.50px;background:#eaeaea"></div>
<div style="position:absolute;left:1461.00px;top:1166.50px;width:10.90px;height:10.60px;background:#5db884"></div>
<div class="t" id="t84" style="left:1481.30px;top:1164.01px;font-size:17.97px;font-weight:400;color:#1e1e1e;letter-spacing:0.350px;-webkit-text-stroke:0.3px #1e1e1e;">Heart Rate</div>
<div class="t" id="t85" style="left:1828.70px;top:1164.01px;font-size:17.97px;font-weight:400;color:#5db884;letter-spacing:0.893px;-webkit-text-stroke:0.2px #5db884;">Collected</div>
<div style="position:absolute;left:1461.00px;top:1194.10px;width:449.70px;height:1.50px;background:#ebebeb"></div>
<div style="position:absolute;left:1461.00px;top:1214.50px;width:10.90px;height:10.60px;background:#5db884"></div>
<div class="t" id="t86" style="left:1481.30px;top:1212.01px;font-size:17.97px;font-weight:400;color:#1e1e1e;letter-spacing:0.350px;-webkit-text-stroke:0.3px #1e1e1e;">Stress</div>
<div class="t" id="t87" style="left:1828.70px;top:1212.01px;font-size:17.97px;font-weight:400;color:#5db884;letter-spacing:0.893px;-webkit-text-stroke:0.2px #5db884;">Collected</div>
<div style="position:absolute;left:1461.00px;top:1242.10px;width:449.70px;height:1.50px;background:#ebebeb"></div>
<div style="position:absolute;left:1461.00px;top:1262.50px;width:10.90px;height:10.60px;background:#5db884"></div>
<div class="t" id="t88" style="left:1481.30px;top:1260.01px;font-size:17.97px;font-weight:400;color:#1e1e1e;letter-spacing:0.350px;-webkit-text-stroke:0.3px #1e1e1e;">Sleep</div>
<div class="t" id="t89" style="left:1828.70px;top:1260.01px;font-size:17.97px;font-weight:400;color:#5db884;letter-spacing:0.893px;-webkit-text-stroke:0.2px #5db884;">Collected</div>
<div style="position:absolute;left:1461.00px;top:1290.10px;width:449.70px;height:1.50px;background:#ebebeb"></div>
</div></div>
</body></html>
